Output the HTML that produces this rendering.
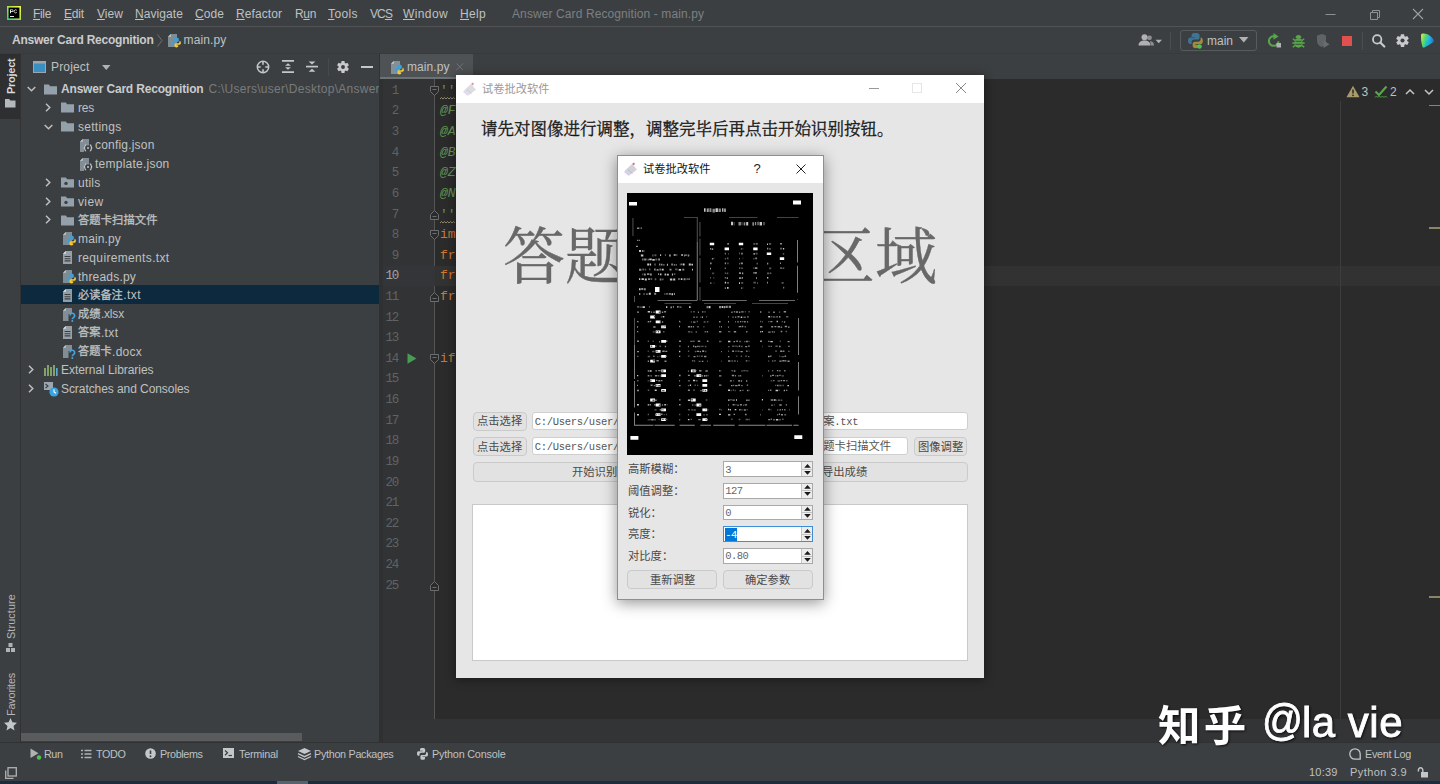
<!DOCTYPE html>
<html><head><meta charset="utf-8"><title>Answer Card Recognition - main.py</title>
<style>
html,body{margin:0;padding:0;}
body{width:1440px;height:784px;position:relative;overflow:hidden;background:#3c3f41;font-family:"Liberation Sans",sans-serif;font-size:13px;color:#bfc1c2;}
div,.t{position:absolute;box-sizing:border-box;}
.t{white-space:pre;display:block;}
u{text-decoration:underline;text-underline-offset:1px;text-decoration-thickness:1px;}
svg{overflow:visible;}
svg text{font-family:"Liberation Sans","Noto Sans CJK SC",sans-serif;white-space:pre;}
svg text.sf{font-family:"Liberation Serif","Noto Serif CJK SC",serif;}
</style></head><body>
<div style="left:0px;top:0px;width:1440px;height:27px;background:#3c3f41;border-bottom:1px solid #515354;"></div>
<svg class="t" style="left:7px;top:6px;" width="14" height="14" viewBox="0 0 14 14"><defs><linearGradient id="lg" x1="0" y1="1" x2="1" y2="0"><stop offset="0" stop-color="#21d789"/><stop offset=".5" stop-color="#a8e04a"/><stop offset="1" stop-color="#fcf84a"/></linearGradient></defs>
<rect width="14" height="14" fill="url(#lg)"/><rect x="1.6" y="1.6" width="10.8" height="10.8" fill="#000"/>
<path d="M3 3.4h2.2a1.2 1.2 0 0 1 0 2.6H3.9v1.3H3zM3.9 4.1v1.2h1.2a.6.6 0 0 0 0-1.2z" fill="#fff"/>
<path d="M9.8 4.4a1.5 1.5 0 1 0 0 1.9" stroke="#fff" stroke-width=".8" fill="none"/>
<rect x="3" y="10" width="4" height=".9" fill="#fff"/></svg>
<span class="t" style="left:33px;top:4.80px;line-height:18px;font-size:12px;color:#bfc1c2;letter-spacing:-0.334px;"><u>F</u>ile</span>
<span class="t" style="left:64px;top:4.80px;line-height:18px;font-size:12px;color:#bfc1c2;letter-spacing:-0.169px;"><u>E</u>dit</span>
<span class="t" style="left:97px;top:4.80px;line-height:18px;font-size:12px;color:#bfc1c2;letter-spacing:0.052px;"><u>V</u>iew</span>
<span class="t" style="left:135px;top:4.80px;line-height:18px;font-size:12px;color:#bfc1c2;letter-spacing:0.080px;"><u>N</u>avigate</span>
<span class="t" style="left:195px;top:4.80px;line-height:18px;font-size:12px;color:#bfc1c2;letter-spacing:0.078px;"><u>C</u>ode</span>
<span class="t" style="left:236px;top:4.80px;line-height:18px;font-size:12px;color:#bfc1c2;letter-spacing:0.081px;"><u>R</u>efactor</span>
<span class="t" style="left:295px;top:4.80px;line-height:18px;font-size:12px;color:#bfc1c2;letter-spacing:-0.338px;">R<u>u</u>n</span>
<span class="t" style="left:328px;top:4.80px;line-height:18px;font-size:12px;color:#bfc1c2;letter-spacing:0.397px;"><u>T</u>ools</span>
<span class="t" style="left:370px;top:4.80px;line-height:18px;font-size:12px;color:#bfc1c2;letter-spacing:-0.891px;">VC<u>S</u></span>
<span class="t" style="left:403px;top:4.80px;line-height:18px;font-size:12px;color:#bfc1c2;letter-spacing:0.387px;"><u>W</u>indow</span>
<span class="t" style="left:460px;top:4.80px;line-height:18px;font-size:12px;color:#bfc1c2;letter-spacing:0.330px;"><u>H</u>elp</span>
<span class="t" style="left:512px;top:4.80px;line-height:18px;font-size:12px;color:#7d8082;letter-spacing:0.099px;">Answer Card Recognition - main.py</span>
<svg class="t" style="left:1320px;top:4px;" width="110" height="20" viewBox="0 0 110 20"><path d="M5.5 10.5h10" stroke="#8e9193" stroke-width="1"/>
<path d="M50.5 8.5h7v7h-7zM52.5 8.5v-2h7v7h-2" stroke="#8e9193" stroke-width="1" fill="none"/>
<path d="M93 5l10 10M103 5l-10 10" stroke="#9da0a2" stroke-width="1.1" fill="none"/></svg>
<div style="left:0px;top:27px;width:1440px;height:27px;background:#3c3f41;border-bottom:1px solid #383b3d;"></div>
<span class="t" style="left:12px;top:31.10px;line-height:18px;font-size:12px;color:#c9cbcc;font-weight:bold;letter-spacing:-0.225px;">Answer Card Recognition</span>
<svg class="t" style="left:156px;top:33px;" width="8" height="15" viewBox="0 0 8 15"><path d="M1.5 1.5L6 7.5L1.5 13.5" stroke="#6e7173" stroke-width="1" fill="none"/></svg>
<svg class="t" style="left:168px;top:33.5px;" width="13.0" height="14.0" viewBox="0 0 13 14"><path d="M2.800 0H9v13H0V2.800z" fill="#94a1ab" opacity=".78"/><path d="M0 2.800L2.800 0v2.800z" fill="#d4dade" opacity=".8"/>
<g transform="translate(3.600,3.800) scale(.98)"><path d="M4.2 0C2.7 0 2.3.7 2.3 1.500v1h2.100v.4H1.400C.5 2.900 0 3.700 0 5s.5 2 1.400 2h.9V5.800c0-.9.7-1.600 1.700-1.600h2c.8 0 1.400-.6 1.400-1.400V1.500c0-.8-.7-1.500-1.900-1.500z" fill="#3f9fd8"/>
<path d="M8.100 2.900v1.100c0 .9-.7 1.600-1.700 1.600h-2c-.8 0-1.400.6-1.400 1.400v1.400c0 .8.700 1.400 1.900 1.400 1.400 0 1.900-.6 1.900-1.400v-.9H4.700v-.4h3.400c.9 0 1.400-.800 1.400-2s-.5-2.200-1.400-2.200z" fill="#f5cb3a"/></g></svg>
<span class="t" style="left:183.6px;top:31.10px;line-height:18px;font-size:12px;color:#bfc1c2;letter-spacing:0.126px;">main.py</span>
<svg class="t" style="left:1138px;top:33px;" width="26" height="16" viewBox="0 0 26 16"><circle cx="6.500" cy="4.200" r="3" fill="#afb1b3"/><path d="M.5 12.500c0-3.500 2.500-5 6-5s6 1.500 6 5z" fill="#afb1b3"/>
<circle cx="11.500" cy="4.800" r="2.400" fill="#afb1b3" opacity=".7"/><path d="M12 8c2.500.2 4 1.600 4 4.500h-3" fill="#afb1b3" opacity=".7"/>
<path d="M17.500 6.800h6.500l-3.250 3.400z" fill="#afb1b3"/></svg>
<div style="left:1170px;top:32px;width:1px;height:18px;background:#4b4e50;"></div>
<div style="left:1179.5px;top:30px;width:77.5px;height:21px;border:1px solid #585b5d;border-radius:3px;"></div>
<svg class="t" style="left:1187.5px;top:33px;opacity:.55;" width="15" height="15" viewBox="0 0 9.6 9.6"><path d="M4.2 0C2.7 0 2.3.7 2.3 1.500v1h2.100v.4H1.400C.5 2.900 0 3.700 0 5s.5 2 1.400 2h.9V5.800c0-.9.7-1.600 1.700-1.600h2c.8 0 1.400-.6 1.400-1.400V1.500c0-.8-.7-1.500-1.900-1.500z" fill="#3f9fd8"/>
<path d="M8.100 2.900v1.100c0 .9-.7 1.600-1.700 1.600h-2c-.8 0-1.400.6-1.400 1.400v1.400c0 .8.700 1.400 1.900 1.400 1.400 0 1.900-.6 1.900-1.400v-.9H4.700v-.4h3.400c.9 0 1.400-.800 1.400-2s-.5-2.200-1.400-2.200z" fill="#f5cb3a"/></svg>
<svg class="t" style="left:1197px;top:44px;" width="5" height="5" viewBox="0 0 5 5"><circle cx="2.500" cy="2.500" r="2.300" fill="#4fc24f"/></svg>
<span class="t" style="left:1207px;top:31.80px;line-height:18px;font-size:12px;color:#bfc1c2;letter-spacing:-0.003px;">main</span>
<svg class="t" style="left:1239px;top:37px;" width="10" height="7" viewBox="0 0 10 7"><path d="M0 0h9.500L4.750 5.500z" fill="#afb1b3"/></svg>
<svg class="t" style="left:1266px;top:32px;" width="18" height="18" viewBox="0 0 18 18"><path d="M12.500 9.300A4.800 4.800 0 1 1 8.300 4.300" stroke="#57a64a" stroke-width="2" fill="none"/>
<path d="M7.500 1l5 3.400l-5 3.400z" fill="#57a64a"/><rect x="10.500" y="11" width="4.500" height="4.500" fill="#afb1b3"/></svg>
<svg class="t" style="left:1289.5px;top:32.5px;" width="17" height="17" viewBox="0 0 17 17"><ellipse cx="8.500" cy="9.800" rx="4.100" ry="4.900" fill="#57a64a"/><path d="M5.600 4.900a2.900 2.900 0 0 1 5.800 0z" fill="#57a64a"/>
<path d="M2.800 5.800l2.700 2M14.200 5.800l-2.700 2M2.300 10h3.200M14.700 10h-3.200M2.800 14.200l2.900-2M14.200 14.200l-2.900-2" stroke="#57a64a" stroke-width="1.400" fill="none"/>
<path d="M5.500 8.300h6M5.500 11.300h6" stroke="#3c3f41" stroke-width=".9"/></svg>
<svg class="t" style="left:1314px;top:32px;" width="18" height="18" viewBox="0 0 18 18"><path d="M3 3.500l5-1.500l4 1.500v5.500c0 3-2 5-4.500 6c-2.500-1-4.500-3-4.500-6z" fill="#606366"/><path d="M9.500 8.500l6 3.700l-6 3.700z" fill="#6a6d70"/></svg>
<div style="left:1341.8px;top:35.8px;width:10.5px;height:10.5px;background:#e0504f;"></div>
<div style="left:1362px;top:32px;width:1px;height:18px;background:#4b4e50;"></div>
<svg class="t" style="left:1369px;top:32px;" width="18" height="18" viewBox="0 0 18 18"><circle cx="8.200" cy="7.400" r="4.200" stroke="#c8cacc" stroke-width="1.800" fill="none"/><path d="M11.300 10.500L15.300 14.500" stroke="#c8cacc" stroke-width="2.200" stroke-linecap="round"/></svg>
<svg class="t" style="left:1394.7px;top:33px;" width="15" height="15" viewBox="0 0 16 16"><g fill="#c8cacc"><circle cx="8" cy="8" r="4.900"/><path d="M6.300 1.200h3.400l.5 3h-4.400z" transform="rotate(0 8 8)"/><path d="M6.300 1.200h3.400l.5 3h-4.400z" transform="rotate(60 8 8)"/><path d="M6.300 1.200h3.400l.5 3h-4.400z" transform="rotate(120 8 8)"/><path d="M6.300 1.200h3.400l.5 3h-4.400z" transform="rotate(180 8 8)"/><path d="M6.300 1.200h3.400l.5 3h-4.400z" transform="rotate(240 8 8)"/><path d="M6.300 1.200h3.400l.5 3h-4.400z" transform="rotate(300 8 8)"/></g><circle cx="8" cy="8" r="2.200" fill="#3c3f41"/></svg>
<svg class="t" style="left:1420px;top:33px;" width="15" height="15" viewBox="0 0 15 15"><defs><linearGradient id="tb" x1="0" y1="0" x2="1" y2=".35"><stop offset="0" stop-color="#e6ee4a"/><stop offset=".38" stop-color="#58d66a"/><stop offset=".62" stop-color="#20c4d8"/><stop offset="1" stop-color="#2a6fe0"/></linearGradient></defs>
<path d="M2.500 .6C6.500 -.2 11.500 3 13.600 6.800c.5 .9 .3 1.700-.5 2.300C10.500 11.200 7 13.300 4.200 14.400c-1 .4-1.700-.1-1.900-1.100C1.300 9.300 .8 5.300 1.100 2c.1-.8 .6-1.300 1.400-1.400z" fill="url(#tb)"/>
<path d="M4.200 14.400C7 13.300 10.500 11.200 13.100 9.100L6.500 7.500z" fill="#18b8c8" opacity=".55"/></svg>
<div style="left:0px;top:54px;width:21px;height:689px;background:#3c3f41;border-right:1px solid #323232;"></div>
<div style="left:0px;top:54px;width:20px;height:65px;background:#2d2f30;"></div>
<span class="t" style="left:10.8px;top:93.8px;font-size:11px;line-height:16px;color:#d8dadb;letter-spacing:-0.256px;font-weight:bold;transform-origin:0 0;transform:rotate(-90deg) translate(0,-8px);">Project</span>
<svg class="t" style="left:5.3px;top:99.3px;" width="11" height="9" viewBox="0 0 11 9"><path d="M0 0h4.200l1.100 1.400H10.500V8.600H0z" fill="#b4b9bc"/></svg>
<span class="t" style="left:10.5px;top:639px;font-size:10.8px;line-height:16px;color:#b4b6b8;letter-spacing:0.131px;transform-origin:0 0;transform:rotate(-90deg) translate(0,-8px);">Structure</span>
<svg class="t" style="left:6px;top:643px;" width="10" height="10" viewBox="0 0 10 10"><rect x="0" y="5" width="4" height="4" fill="#aeb3b7"/><rect x="5" y="5" width="4" height="4" fill="#aeb3b7"/><rect x="2.500" y="0" width="4" height="4" fill="#aeb3b7"/></svg>
<span class="t" style="left:10.5px;top:716px;font-size:10.8px;line-height:16px;color:#b4b6b8;letter-spacing:-0.157px;transform-origin:0 0;transform:rotate(-90deg) translate(0,-8px);">Favorites</span>
<svg class="t" style="left:4px;top:718px;" width="13" height="13" viewBox="0 0 13 13"><path d="M6.500 0l1.900 4.300l4.600.5l-3.500 3.100l1 4.600L6.500 10.100L2.500 12.500l1-4.600L0 4.800l4.600-.5z" fill="#c4c6c8"/></svg>
<div style="left:21px;top:54px;width:359px;height:689px;background:#3c3f41;border-right:1px solid #323232;"></div>
<svg class="t" style="left:33px;top:61px;" width="13" height="12" viewBox="0 0 13 12"><rect x=".5" y=".5" width="12" height="11" fill="#3b8fc0" stroke="#9aa7b0" stroke-width="1"/><rect x="0" y="0" width="13" height="2.500" fill="#9aa7b0"/></svg>
<span class="t" style="left:51px;top:58.30px;line-height:18px;font-size:12px;color:#bfc1c2;letter-spacing:0.165px;">Project</span>
<svg class="t" style="left:101.7px;top:65.2px;" width="9" height="6" viewBox="0 0 9 6"><path d="M0 0h8.500L4.250 5z" fill="#afb1b3"/></svg>
<svg class="t" style="left:256.3px;top:60px;" width="14" height="14" viewBox="0 0 14 14"><circle cx="7" cy="7" r="5.700" stroke="#c4c6c8" stroke-width="1.500" fill="none"/><path d="M7 1.300v3.400M7 9.300v3.400M1.300 7h3.400M9.300 7h3.400" stroke="#c4c6c8" stroke-width="1.600"/></svg>
<svg class="t" style="left:282px;top:60.4px;" width="12" height="13" viewBox="0 0 12 13"><path d="M0 .9h12M0 12.100h12" stroke="#c4c6c8" stroke-width="1.700"/><path d="M6 3.200l2.900 2.500H3.100zM6 9.800L3.100 7.300h5.800z" fill="#c4c6c8"/></svg>
<svg class="t" style="left:306px;top:60px;" width="12" height="14" viewBox="0 0 12 14"><path d="M0 6.600h12" stroke="#c4c6c8" stroke-width="1.700"/><path d="M6 4.400L2.600 1.400h6.800zM6 8.800l3.400 3h-6.800z" fill="#c4c6c8"/></svg>
<div style="left:327.5px;top:58px;width:1px;height:18px;background:#474a4c;"></div>
<svg class="t" style="left:336px;top:59.5px;" width="14" height="14" viewBox="0 0 16 16"><g fill="#c8cacc"><circle cx="8" cy="8" r="4.900"/><path d="M6.300 1.200h3.400l.5 3h-4.400z" transform="rotate(0 8 8)"/><path d="M6.300 1.200h3.400l.5 3h-4.400z" transform="rotate(60 8 8)"/><path d="M6.300 1.200h3.400l.5 3h-4.400z" transform="rotate(120 8 8)"/><path d="M6.300 1.200h3.400l.5 3h-4.400z" transform="rotate(180 8 8)"/><path d="M6.300 1.200h3.400l.5 3h-4.400z" transform="rotate(240 8 8)"/><path d="M6.300 1.200h3.400l.5 3h-4.400z" transform="rotate(300 8 8)"/></g><circle cx="8" cy="8" r="2.200" fill="#3c3f41"/></svg>
<div style="left:361px;top:66px;width:12px;height:2px;background:#c4c6c8;"></div>
<div style="left:21px;top:285.375px;width:358px;height:18.75px;background:#0d293e;"></div>
<svg class="t" style="left:26.5px;top:86.1px;" width="9" height="6" viewBox="0 0 9 6"><path d="M.7 1L4.500 4.800L8.300 1" stroke="#bdbfc1" stroke-width="1.500" fill="none"/></svg>
<svg class="t" style="left:44px;top:83.5px;" width="13" height="11" viewBox="0 0 13 11"><path d="M0 .5h4.800l1.400 1.800H13V10.500H0z" fill="#94a1ab"/></svg>
<span class="t" style="left:61px;top:80.10px;line-height:18px;font-size:12px;color:#c9cbcc;font-weight:bold;letter-spacing:-0.182px;">Answer Card Recognition</span>
<div style="left:208.5px;top:79.5px;width:170.500px;height:18px;overflow:hidden;">
<span class="t" style="left:0px;top:0.30px;line-height:18px;font-size:12px;color:#787b7d;letter-spacing:0.261px;">C:\Users\user\Desktop\Answer Card</span>
</div>
<svg class="t" style="left:44.8px;top:102.85px;" width="6" height="9" viewBox="0 0 6 9"><path d="M1 .7L4.800 4.500L1 8.300" stroke="#bdbfc1" stroke-width="1.500" fill="none"/></svg>
<svg class="t" style="left:61px;top:102.25px;" width="13" height="11" viewBox="0 0 13 11"><path d="M0 .5h4.800l1.400 1.800H13V10.500H0z" fill="#94a1ab"/></svg>
<span class="t" style="left:78px;top:98.85px;line-height:18px;font-size:12px;color:#bfc1c2;letter-spacing:-0.223px;">res</span>
<svg class="t" style="left:43.5px;top:123.6px;" width="9" height="6" viewBox="0 0 9 6"><path d="M.7 1L4.500 4.800L8.300 1" stroke="#bdbfc1" stroke-width="1.500" fill="none"/></svg>
<svg class="t" style="left:61px;top:121.0px;" width="13" height="11" viewBox="0 0 13 11"><path d="M0 .5h4.800l1.400 1.800H13V10.500H0z" fill="#94a1ab"/></svg>
<span class="t" style="left:78px;top:117.60px;line-height:18px;font-size:12px;color:#bfc1c2;letter-spacing:0.268px;">settings</span>
<svg class="t" style="left:44.8px;top:177.85px;" width="6" height="9" viewBox="0 0 6 9"><path d="M1 .7L4.800 4.500L1 8.300" stroke="#bdbfc1" stroke-width="1.500" fill="none"/></svg>
<svg class="t" style="left:61px;top:177.25px;" width="13" height="11" viewBox="0 0 13 11"><path d="M0 .5h4.800l1.400 1.800H13V10.500H0z" fill="#94a1ab"/><circle cx="5" cy="6.400" r="1.700" fill="#3c3f41"/></svg>
<span class="t" style="left:78px;top:173.85px;line-height:18px;font-size:12px;color:#bfc1c2;letter-spacing:0.232px;">utils</span>
<svg class="t" style="left:44.8px;top:196.6px;" width="6" height="9" viewBox="0 0 6 9"><path d="M1 .7L4.800 4.500L1 8.300" stroke="#bdbfc1" stroke-width="1.500" fill="none"/></svg>
<svg class="t" style="left:61px;top:196.0px;" width="13" height="11" viewBox="0 0 13 11"><path d="M0 .5h4.800l1.400 1.800H13V10.500H0z" fill="#94a1ab"/><circle cx="5" cy="6.400" r="1.700" fill="#3c3f41"/></svg>
<span class="t" style="left:78px;top:192.60px;line-height:18px;font-size:12px;color:#bfc1c2;letter-spacing:0.373px;">view</span>
<svg class="t" style="left:44.8px;top:215.35px;" width="6" height="9" viewBox="0 0 6 9"><path d="M1 .7L4.800 4.500L1 8.300" stroke="#bdbfc1" stroke-width="1.500" fill="none"/></svg>
<svg class="t" style="left:61px;top:214.75px;" width="13" height="11" viewBox="0 0 13 11"><path d="M0 .5h4.800l1.400 1.800H13V10.500H0z" fill="#94a1ab"/></svg>
<svg class="t" style="left:78px;top:211.84px;" width="83.5" height="15.8"><text x="0" y="12.20" font-size="11.3" fill="#bfc1c2" stroke="#bfc1c2" stroke-width="0.3" letter-spacing="0.06">答题卡扫描文件</text></svg>
<svg class="t" style="left:80px;top:139.25px;" width="13" height="14" viewBox="0 0 13 14"><path d="M2.800 0H9v6.500H4v6.500H0V2.800z" fill="#94a1ab" opacity=".8"/><path d="M0 2.800L2.800 0v2.800z" fill="#d4dade" opacity=".8"/><path d="M6.200 5.800c-1.200 0-1.300.6-1.300 1.500s-.2 1.400-1 1.600c.8.2 1 .7 1 1.600s.1 1.500 1.300 1.500M9.800 5.800c1.200 0 1.300.6 1.300 1.500s.2 1.400 1 1.600c-.8.2-1 .7-1 1.600s-.1 1.500-1.300 1.500" stroke="#c5cacd" stroke-width="1.200" fill="none"/><circle cx="8" cy="9" r="1" fill="#c5cacd"/></svg>
<span class="t" style="left:95px;top:136.35px;line-height:18px;font-size:12px;color:#bfc1c2;letter-spacing:0.194px;">config.json</span>
<svg class="t" style="left:80px;top:158.0px;" width="13" height="14" viewBox="0 0 13 14"><path d="M2.800 0H9v6.500H4v6.500H0V2.800z" fill="#94a1ab" opacity=".8"/><path d="M0 2.800L2.800 0v2.800z" fill="#d4dade" opacity=".8"/><path d="M6.200 5.800c-1.200 0-1.300.6-1.300 1.500s-.2 1.400-1 1.600c.8.2 1 .7 1 1.600s.1 1.500 1.300 1.500M9.800 5.800c1.200 0 1.300.6 1.300 1.500s.2 1.400 1 1.600c-.8.2-1 .7-1 1.600s-.1 1.500-1.300 1.500" stroke="#c5cacd" stroke-width="1.200" fill="none"/><circle cx="8" cy="9" r="1" fill="#c5cacd"/></svg>
<span class="t" style="left:95px;top:155.10px;line-height:18px;font-size:12px;color:#bfc1c2;letter-spacing:0.241px;">template.json</span>
<svg class="t" style="left:63px;top:232.3px;" width="13.0" height="14.0" viewBox="0 0 13 14"><path d="M2.800 0H9v13H0V2.800z" fill="#94a1ab" opacity=".78"/><path d="M0 2.800L2.800 0v2.800z" fill="#d4dade" opacity=".8"/>
<g transform="translate(3.600,3.800) scale(.98)"><path d="M4.2 0C2.7 0 2.3.7 2.3 1.500v1h2.100v.4H1.400C.5 2.900 0 3.700 0 5s.5 2 1.400 2h.9V5.800c0-.9.7-1.600 1.700-1.600h2c.8 0 1.400-.6 1.400-1.400V1.500c0-.8-.7-1.500-1.900-1.500z" fill="#3f9fd8"/>
<path d="M8.100 2.900v1.100c0 .9-.7 1.600-1.700 1.600h-2c-.8 0-1.400.6-1.400 1.400v1.400c0 .8.700 1.400 1.900 1.400 1.400 0 1.900-.6 1.900-1.400v-.9H4.700v-.4h3.400c.9 0 1.400-.800 1.400-2s-.5-2.200-1.400-2.200z" fill="#f5cb3a"/></g></svg>
<span class="t" style="left:78px;top:230.10px;line-height:18px;font-size:12px;color:#bfc1c2;letter-spacing:0.140px;">main.py</span>
<svg class="t" style="left:63px;top:269.8px;" width="13.0" height="14.0" viewBox="0 0 13 14"><path d="M2.800 0H9v13H0V2.800z" fill="#94a1ab" opacity=".78"/><path d="M0 2.800L2.800 0v2.800z" fill="#d4dade" opacity=".8"/>
<g transform="translate(3.600,3.800) scale(.98)"><path d="M4.2 0C2.7 0 2.3.7 2.3 1.500v1h2.100v.4H1.400C.5 2.900 0 3.700 0 5s.5 2 1.400 2h.9V5.800c0-.9.7-1.600 1.700-1.600h2c.8 0 1.400-.6 1.400-1.400V1.500c0-.8-.7-1.500-1.900-1.500z" fill="#3f9fd8"/>
<path d="M8.100 2.900v1.100c0 .9-.7 1.600-1.700 1.600h-2c-.8 0-1.400.6-1.400 1.400v1.400c0 .8.700 1.400 1.900 1.400 1.400 0 1.900-.6 1.900-1.400v-.9H4.700v-.4h3.400c.9 0 1.400-.800 1.400-2s-.5-2.200-1.400-2.200z" fill="#f5cb3a"/></g></svg>
<span class="t" style="left:78px;top:267.60px;line-height:18px;font-size:12px;color:#bfc1c2;letter-spacing:0.197px;">threads.py</span>
<svg class="t" style="left:63px;top:251.25px;" width="9" height="13" viewBox="0 0 9 13"><path d="M2.800 0H9v13H0V2.800z" fill="#a7b2ba" opacity=".85"/><path d="M0 2.800L2.800 0v2.800z" fill="#dfe4e7"/><path d="M1.600 5.500h5.800M1.600 7.700h5.800M1.600 9.900h5.800" stroke="#3c3f41" stroke-width="1.100"/></svg>
<span class="t" style="left:78px;top:248.85px;line-height:18px;font-size:12px;color:#bfc1c2;letter-spacing:0.342px;">requirements.txt</span>
<svg class="t" style="left:63px;top:288.75px;" width="13" height="14" viewBox="0 0 13 14"><path d="M2.800 0H9v13H0V2.800z" fill="#a7b2ba" opacity=".85"/><path d="M0 2.800L2.800 0v2.800z" fill="#dfe4e7"/><path d="M1.600 5.500h5.800M1.600 7.700h5.800M1.600 9.900h5.800" stroke="#3c3f41" stroke-width="1.100"/></svg>
<svg class="t" style="left:78px;top:286.91px;" width="48.8" height="15.7"><text x="0" y="12.10" font-size="11.2" fill="#bfc1c2" stroke="#bfc1c2" stroke-width="0.3">必读备注</text></svg>
<span class="t" style="left:123.3px;top:286.35px;line-height:18px;font-size:12px;color:#bfc1c2;letter-spacing:0.425px;">.txt</span>
<svg class="t" style="left:63px;top:307.5px;" width="13" height="14" viewBox="0 0 13 14"><path d="M2.800 0H9v6H5.500v7H0V2.800z" fill="#94a1ab" opacity=".8"/><path d="M0 2.800L2.800 0v2.800z" fill="#d4dade" opacity=".8"/><path d="M7 7.600a2.300 2.300 0 1 1 3.400 2c-.8.5-1.100.9-1.100 1.700" stroke="#43a5e0" stroke-width="1.600" fill="none"/><circle cx="9.300" cy="13" r="1" fill="#43a5e0"/></svg>
<svg class="t" style="left:78px;top:305.66px;" width="26.4" height="15.7"><text x="0" y="12.10" font-size="11.2" fill="#bfc1c2" stroke="#bfc1c2" stroke-width="0.3">成绩</text></svg>
<span class="t" style="left:100.9px;top:305.10px;line-height:18px;font-size:12px;color:#bfc1c2;letter-spacing:-0.180px;">.xlsx</span>
<svg class="t" style="left:63px;top:326.25px;" width="13" height="14" viewBox="0 0 13 14"><path d="M2.800 0H9v13H0V2.800z" fill="#a7b2ba" opacity=".85"/><path d="M0 2.800L2.800 0v2.800z" fill="#dfe4e7"/><path d="M1.600 5.500h5.800M1.600 7.700h5.800M1.600 9.900h5.800" stroke="#3c3f41" stroke-width="1.100"/></svg>
<svg class="t" style="left:78px;top:324.41px;" width="26.4" height="15.7"><text x="0" y="12.10" font-size="11.2" fill="#bfc1c2" stroke="#bfc1c2" stroke-width="0.3">答案</text></svg>
<span class="t" style="left:100.9px;top:323.85px;line-height:18px;font-size:12px;color:#bfc1c2;letter-spacing:0.400px;">.txt</span>
<svg class="t" style="left:63px;top:345.0px;" width="13" height="14" viewBox="0 0 13 14"><path d="M2.800 0H9v6H5.500v7H0V2.800z" fill="#94a1ab" opacity=".8"/><path d="M0 2.800L2.800 0v2.800z" fill="#d4dade" opacity=".8"/><path d="M7 7.600a2.300 2.300 0 1 1 3.400 2c-.8.5-1.100.9-1.100 1.700" stroke="#43a5e0" stroke-width="1.600" fill="none"/><circle cx="9.300" cy="13" r="1" fill="#43a5e0"/></svg>
<svg class="t" style="left:78px;top:343.16px;" width="37.6" height="15.7"><text x="0" y="12.10" font-size="11.2" fill="#bfc1c2" stroke="#bfc1c2" stroke-width="0.3">答题卡</text></svg>
<span class="t" style="left:112.1px;top:342.60px;line-height:18px;font-size:12px;color:#bfc1c2;letter-spacing:0.244px;">.docx</span>
<svg class="t" style="left:27.8px;top:365.35px;" width="6" height="9" viewBox="0 0 6 9"><path d="M1 .7L4.800 4.500L1 8.300" stroke="#bdbfc1" stroke-width="1.500" fill="none"/></svg>
<svg class="t" style="left:44px;top:363.75px;" width="14" height="12" viewBox="0 0 14 12"><path d="M1 4v8M4 1v11M7 3v9M10 1v11" stroke="#8fb36f" stroke-width="1.700"/><path d="M12.800 4v8" stroke="#5fa8d4" stroke-width="1.700"/></svg>
<span class="t" style="left:61px;top:361.35px;line-height:18px;font-size:12px;color:#bfc1c2;letter-spacing:-0.049px;">External Libraries</span>
<svg class="t" style="left:27.8px;top:384.1px;" width="6" height="9" viewBox="0 0 6 9"><path d="M1 .7L4.800 4.500L1 8.300" stroke="#bdbfc1" stroke-width="1.500" fill="none"/></svg>
<svg class="t" style="left:44px;top:381.5px;" width="15" height="15" viewBox="0 0 15 15"><path d="M0 0h9v8H0z" fill="#9aa7b0"/><path d="M1.500 2l2.500 2l-2.500 2" stroke="#3c3f41" stroke-width="1.100" fill="none"/><circle cx="10" cy="10" r="4.600" fill="#3aa5e6"/><path d="M10 7.200V10l2 1.300" stroke="#fff" stroke-width="1.100" fill="none"/></svg>
<span class="t" style="left:61px;top:380.10px;line-height:18px;font-size:12px;color:#bfc1c2;letter-spacing:-0.071px;">Scratches and Consoles</span>
<div style="left:21px;top:732.5px;width:280.5px;height:8.5px;background:#595b5d;"></div>
<div style="left:380px;top:54px;width:1060px;height:25.5px;background:#3c3f41;border-bottom:1px solid #323232;"></div>
<div style="left:380px;top:54px;width:92.5px;height:25.5px;background:#4e5254;"></div>
<div style="left:380px;top:76.7px;width:92.5px;height:2.8px;background:#6d7275;"></div>
<svg class="t" style="left:391px;top:60.5px;" width="13.0" height="14.0" viewBox="0 0 13 14"><path d="M2.800 0H9v13H0V2.800z" fill="#94a1ab" opacity=".78"/><path d="M0 2.800L2.800 0v2.800z" fill="#d4dade" opacity=".8"/>
<g transform="translate(3.600,3.800) scale(.98)"><path d="M4.2 0C2.7 0 2.3.7 2.3 1.500v1h2.100v.4H1.400C.5 2.900 0 3.700 0 5s.5 2 1.400 2h.9V5.800c0-.9.7-1.600 1.700-1.600h2c.8 0 1.400-.6 1.400-1.400V1.500c0-.8-.7-1.500-1.900-1.500z" fill="#3f9fd8"/>
<path d="M8.100 2.900v1.100c0 .9-.7 1.600-1.700 1.600h-2c-.8 0-1.400.6-1.400 1.400v1.400c0 .8.700 1.400 1.900 1.400 1.400 0 1.900-.6 1.900-1.400v-.9H4.700v-.4h3.400c.9 0 1.400-.800 1.400-2s-.5-2.200-1.400-2.200z" fill="#f5cb3a"/></g></svg>
<span class="t" style="left:407px;top:58.30px;line-height:18px;font-size:12px;color:#bfc1c2;letter-spacing:0.069px;">main.py</span>
<svg class="t" style="left:455px;top:62px;" width="10" height="10" viewBox="0 0 10 10"><path d="M1.500 1.500l6.500 6.500M8 1.500L1.500 8" stroke="#6f7375" stroke-width="1"/></svg>
<div style="left:380px;top:79px;width:1060px;height:640px;background:#2b2b2b;"></div>
<div style="left:380px;top:79px;width:54px;height:640px;background:#313335;"></div>
<div style="left:379px;top:79px;width:3.5px;height:663px;background:#2e3032;"></div>
<div style="left:434px;top:79px;width:1px;height:640px;background:#555555;"></div>
<div style="left:382.5px;top:265.77000000000004px;width:52px;height:20.62px;background:#333538;"></div>
<div style="left:435px;top:265.77000000000004px;width:1005px;height:20.62px;background:#323232;"></div>
<span class="t" style="left:391.7px;top:81.80px;line-height:18px;font-size:12.5px;color:#606366;font-family:'Liberation Mono',monospace;letter-spacing:-1.200px;">1</span>
<span class="t" style="left:391.7px;top:102.42px;line-height:18px;font-size:12.5px;color:#606366;font-family:'Liberation Mono',monospace;letter-spacing:-1.200px;">2</span>
<span class="t" style="left:391.7px;top:123.04px;line-height:18px;font-size:12.5px;color:#606366;font-family:'Liberation Mono',monospace;letter-spacing:-1.200px;">3</span>
<span class="t" style="left:391.7px;top:143.66px;line-height:18px;font-size:12.5px;color:#606366;font-family:'Liberation Mono',monospace;letter-spacing:-1.200px;">4</span>
<span class="t" style="left:391.7px;top:164.28px;line-height:18px;font-size:12.5px;color:#606366;font-family:'Liberation Mono',monospace;letter-spacing:-1.200px;">5</span>
<span class="t" style="left:391.7px;top:184.90px;line-height:18px;font-size:12.5px;color:#606366;font-family:'Liberation Mono',monospace;letter-spacing:-1.200px;">6</span>
<span class="t" style="left:391.7px;top:205.52px;line-height:18px;font-size:12.5px;color:#606366;font-family:'Liberation Mono',monospace;letter-spacing:-1.200px;">7</span>
<span class="t" style="left:391.7px;top:226.14px;line-height:18px;font-size:12.5px;color:#606366;font-family:'Liberation Mono',monospace;letter-spacing:-1.200px;">8</span>
<span class="t" style="left:391.7px;top:246.76px;line-height:18px;font-size:12.5px;color:#606366;font-family:'Liberation Mono',monospace;letter-spacing:-1.200px;">9</span>
<span class="t" style="left:385.4px;top:267.38px;line-height:18px;font-size:12.5px;color:#a4a3a3;font-family:'Liberation Mono',monospace;letter-spacing:-1.200px;">10</span>
<span class="t" style="left:385.4px;top:288.00px;line-height:18px;font-size:12.5px;color:#606366;font-family:'Liberation Mono',monospace;letter-spacing:-1.200px;">11</span>
<span class="t" style="left:385.4px;top:308.62px;line-height:18px;font-size:12.5px;color:#606366;font-family:'Liberation Mono',monospace;letter-spacing:-1.200px;">12</span>
<span class="t" style="left:385.4px;top:329.24px;line-height:18px;font-size:12.5px;color:#606366;font-family:'Liberation Mono',monospace;letter-spacing:-1.200px;">13</span>
<span class="t" style="left:385.4px;top:349.86px;line-height:18px;font-size:12.5px;color:#606366;font-family:'Liberation Mono',monospace;letter-spacing:-1.200px;">14</span>
<span class="t" style="left:385.4px;top:370.48px;line-height:18px;font-size:12.5px;color:#606366;font-family:'Liberation Mono',monospace;letter-spacing:-1.200px;">15</span>
<span class="t" style="left:385.4px;top:391.10px;line-height:18px;font-size:12.5px;color:#606366;font-family:'Liberation Mono',monospace;letter-spacing:-1.200px;">16</span>
<span class="t" style="left:385.4px;top:411.72px;line-height:18px;font-size:12.5px;color:#606366;font-family:'Liberation Mono',monospace;letter-spacing:-1.200px;">17</span>
<span class="t" style="left:385.4px;top:432.34px;line-height:18px;font-size:12.5px;color:#606366;font-family:'Liberation Mono',monospace;letter-spacing:-1.200px;">18</span>
<span class="t" style="left:385.4px;top:452.96px;line-height:18px;font-size:12.5px;color:#606366;font-family:'Liberation Mono',monospace;letter-spacing:-1.200px;">19</span>
<span class="t" style="left:385.4px;top:473.58px;line-height:18px;font-size:12.5px;color:#606366;font-family:'Liberation Mono',monospace;letter-spacing:-1.200px;">20</span>
<span class="t" style="left:385.4px;top:494.20px;line-height:18px;font-size:12.5px;color:#606366;font-family:'Liberation Mono',monospace;letter-spacing:-1.200px;">21</span>
<span class="t" style="left:385.4px;top:514.82px;line-height:18px;font-size:12.5px;color:#606366;font-family:'Liberation Mono',monospace;letter-spacing:-1.200px;">22</span>
<span class="t" style="left:385.4px;top:535.44px;line-height:18px;font-size:12.5px;color:#606366;font-family:'Liberation Mono',monospace;letter-spacing:-1.200px;">23</span>
<span class="t" style="left:385.4px;top:556.06px;line-height:18px;font-size:12.5px;color:#606366;font-family:'Liberation Mono',monospace;letter-spacing:-1.200px;">24</span>
<span class="t" style="left:385.4px;top:576.68px;line-height:18px;font-size:12.5px;color:#606366;font-family:'Liberation Mono',monospace;letter-spacing:-1.200px;">25</span>
<svg class="t" style="left:407px;top:353.06px;" width="10" height="11" viewBox="0 0 10 11"><path d="M.5 .3L9.500 5.500L.5 10.700z" fill="#499c54"/></svg>
<svg class="t" style="left:430px;top:86.0px;" width="9" height="10" viewBox="0 0 9 10"><path d="M.5 .5h8v5L4.500 9.500L.5 5.500z" fill="#2b2b2b" stroke="#6b6e70" stroke-width="1"/><path d="M2.500 3.500h4" stroke="#6b6e70" stroke-width="1"/></svg>
<svg class="t" style="left:430px;top:209.72px;" width="9" height="10" viewBox="0 0 9 10"><path d="M.5 9.500h8v-5L4.500 .5L.5 4.500z" fill="#2b2b2b" stroke="#6b6e70" stroke-width="1"/><path d="M2.500 6.500h4" stroke="#6b6e70" stroke-width="1"/></svg>
<svg class="t" style="left:430px;top:230.34px;" width="9" height="10" viewBox="0 0 9 10"><path d="M.5 .5h8v5L4.500 9.500L.5 5.500z" fill="#2b2b2b" stroke="#6b6e70" stroke-width="1"/><path d="M2.500 3.500h4" stroke="#6b6e70" stroke-width="1"/></svg>
<svg class="t" style="left:430px;top:292.20000000000005px;" width="9" height="10" viewBox="0 0 9 10"><path d="M.5 9.500h8v-5L4.500 .5L.5 4.500z" fill="#2b2b2b" stroke="#6b6e70" stroke-width="1"/><path d="M2.500 6.500h4" stroke="#6b6e70" stroke-width="1"/></svg>
<svg class="t" style="left:430px;top:354.06px;" width="9" height="10" viewBox="0 0 9 10"><path d="M.5 .5h8v5L4.500 9.500L.5 5.500z" fill="#2b2b2b" stroke="#6b6e70" stroke-width="1"/><path d="M2.500 3.500h4" stroke="#6b6e70" stroke-width="1"/></svg>
<svg class="t" style="left:430px;top:580.88px;" width="9" height="10" viewBox="0 0 9 10"><path d="M.5 9.500h8v-5L4.500 .5L.5 4.500z" fill="#2b2b2b" stroke="#6b6e70" stroke-width="1"/><path d="M2.500 6.500h4" stroke="#6b6e70" stroke-width="1"/></svg>
<span class="t" style="left:440px;top:81.80px;line-height:18px;font-size:13px;color:#629755;font-family:'Liberation Mono',monospace;letter-spacing:0.050px;">&#x27;&#x27;&#x27;</span>
<span class="t" style="left:440px;top:102.42px;line-height:18px;font-size:13px;color:#629755;font-family:'Liberation Mono',monospace;font-style:italic;letter-spacing:0.050px;">@File</span>
<span class="t" style="left:440px;top:123.04px;line-height:18px;font-size:13px;color:#629755;font-family:'Liberation Mono',monospace;font-style:italic;letter-spacing:0.050px;">@Auth</span>
<span class="t" style="left:440px;top:143.66px;line-height:18px;font-size:13px;color:#629755;font-family:'Liberation Mono',monospace;font-style:italic;letter-spacing:0.050px;">@Blog</span>
<span class="t" style="left:440px;top:164.28px;line-height:18px;font-size:13px;color:#629755;font-family:'Liberation Mono',monospace;font-style:italic;letter-spacing:0.050px;">@ZhiH</span>
<span class="t" style="left:440px;top:184.90px;line-height:18px;font-size:13px;color:#629755;font-family:'Liberation Mono',monospace;font-style:italic;letter-spacing:0.050px;">@Note</span>
<span class="t" style="left:440px;top:205.52px;line-height:18px;font-size:13px;color:#629755;font-family:'Liberation Mono',monospace;letter-spacing:0.050px;">&#x27;&#x27;&#x27;</span>
<span class="t" style="left:440px;top:226.14px;line-height:18px;font-size:13px;color:#cc7832;font-family:'Liberation Mono',monospace;letter-spacing:0.050px;">import</span>
<span class="t" style="left:440px;top:246.76px;line-height:18px;font-size:13px;color:#cc7832;font-family:'Liberation Mono',monospace;letter-spacing:0.050px;">from</span>
<span class="t" style="left:440px;top:267.38px;line-height:18px;font-size:13px;color:#cc7832;font-family:'Liberation Mono',monospace;letter-spacing:0.050px;">from</span>
<span class="t" style="left:440px;top:288.00px;line-height:18px;font-size:13px;color:#cc7832;font-family:'Liberation Mono',monospace;letter-spacing:0.050px;">from</span>
<span class="t" style="left:440px;top:349.86px;line-height:18px;font-size:13px;color:#cc7832;font-family:'Liberation Mono',monospace;letter-spacing:0.050px;">if __</span>
<svg class="t" style="left:440px;top:97.0px;" width="16" height="3" viewBox="0 0 16 3"><path d="M0 2l1.500-1.500L3 2l1.500-1.500L6 2l1.500-1.500L9 2l1.500-1.500L12 2l1.500-1.500L15 2" stroke="#a9a27a" stroke-width=".8" fill="none"/></svg>
<svg class="t" style="left:440px;top:220.72px;" width="16" height="3" viewBox="0 0 16 3"><path d="M0 2l1.500-1.500L3 2l1.500-1.500L6 2l1.500-1.500L9 2l1.500-1.500L12 2l1.500-1.500L15 2" stroke="#a9a27a" stroke-width=".8" fill="none"/></svg>
<div style="left:1340px;top:100px;width:1px;height:619px;background:#3d3d3d;"></div>
<div style="left:1340px;top:79.5px;width:1px;height:21px;background:#2b2b2b;"></div>
<div style="left:1429px;top:104.5px;width:11px;height:1.5px;background:#8a8566;"></div>
<div style="left:1429px;top:227px;width:11px;height:1.5px;background:#8a8566;"></div>
<div style="left:1429px;top:596px;width:11px;height:1.5px;background:#8a8566;"></div>
<svg class="t" style="left:1346px;top:85px;" width="14" height="13" viewBox="0 0 14 13"><path d="M7 .8L13.500 12.200H.5z" fill="#a89c6a"/><path d="M7 4.500v4" stroke="#2b2b2b" stroke-width="1.500"/><circle cx="7" cy="10.300" r=".9" fill="#2b2b2b"/></svg>
<span class="t" style="left:1361.5px;top:83.30px;line-height:18px;font-size:12px;color:#bfc1c2;">3</span>
<svg class="t" style="left:1374px;top:85px;" width="14" height="14" viewBox="0 0 14 14"><path d="M1.500 6.500l3.500 3.500L12.500 1.500" stroke="#57a64a" stroke-width="2.200" fill="none"/><path d="M1 12.500l1.500-1.500L4 12.500l1.500-1.500L7 12.500l1.500-1.500L10 12.500l1.500-1.500L13 12.500" stroke="#57a64a" stroke-width=".9" fill="none"/></svg>
<span class="t" style="left:1390px;top:83.30px;line-height:18px;font-size:12px;color:#bfc1c2;">2</span>
<svg class="t" style="left:1405px;top:88px;" width="10" height="7" viewBox="0 0 10 7"><path d="M1 6L5 2l4 4" stroke="#c4c6c8" stroke-width="1.500" fill="none"/></svg>
<svg class="t" style="left:1424px;top:89px;" width="10" height="7" viewBox="0 0 10 7"><path d="M1 1l4 4l4-4" stroke="#c4c6c8" stroke-width="1.500" fill="none"/></svg>
<div style="left:382.5px;top:719px;width:1057.5px;height:22.5px;background:#323436;"></div>
<div style="left:0px;top:742.5px;width:1440px;height:20px;background:#3c3f41;"></div>
<div style="left:0px;top:741.5px;width:1440px;height:1px;background:#2f3133;"></div>
<svg class="t" style="left:30px;top:748px;" width="12" height="12" viewBox="0 0 12 12"><path d="M.5 .5l8 4.700l-8 4.700z" fill="#afb1b3"/><circle cx="9" cy="9.500" r="2.200" fill="#4fc24f"/></svg>
<span class="t" style="left:44px;top:744.50px;line-height:18px;font-size:10.8px;color:#bfc1c2;letter-spacing:-0.437px;">Run</span>
<svg class="t" style="left:81px;top:748.5px;" width="11" height="10" viewBox="0 0 11 10"><path d="M0 1.500h2M3.500 1.500h7M0 5h2M3.500 5h7M0 8.500h2M3.500 8.500h7" stroke="#afb1b3" stroke-width="1.700"/></svg>
<span class="t" style="left:96px;top:744.50px;line-height:18px;font-size:10.8px;color:#bfc1c2;letter-spacing:-0.376px;">TODO</span>
<svg class="t" style="left:144.5px;top:747.5px;" width="11" height="11" viewBox="0 0 11 11"><circle cx="5.500" cy="5.500" r="5.300" fill="#c4c6c8"/><path d="M5.500 2.500v3.500" stroke="#3c3f41" stroke-width="1.600"/><circle cx="5.500" cy="8.200" r=".95" fill="#3c3f41"/></svg>
<span class="t" style="left:160px;top:744.50px;line-height:18px;font-size:10.8px;color:#bfc1c2;letter-spacing:-0.389px;">Problems</span>
<svg class="t" style="left:223px;top:748px;" width="11" height="10" viewBox="0 0 11 10"><rect width="11" height="10" fill="#c4c6c8"/><path d="M2 2.500l2.500 2.300L2 7.200" stroke="#3c3f41" stroke-width="1.200" fill="none"/><path d="M5.500 7.500h3.500" stroke="#3c3f41" stroke-width="1.200"/></svg>
<span class="t" style="left:239px;top:744.50px;line-height:18px;font-size:10.8px;color:#bfc1c2;letter-spacing:-0.226px;">Terminal</span>
<svg class="t" style="left:298px;top:747.5px;" width="13" height="12" viewBox="0 0 13 12"><path d="M6.500 0L13 3L6.500 6L0 3z" fill="#c4c6c8"/><path d="M0 5.700l6.500 3l6.500-3M0 8.500l6.500 3l6.500-3" stroke="#c4c6c8" stroke-width="1.300" fill="none"/></svg>
<span class="t" style="left:314px;top:744.50px;line-height:18px;font-size:10.8px;color:#bfc1c2;letter-spacing:-0.304px;">Python Packages</span>
<svg class="t" style="left:417px;top:747.5px;" width="11" height="12" viewBox="0 0 11 12"><path d="M5.300 0C3.500 0 3 .7 3 1.600v1.200h2.500v.4H1.500C.6 3.200 0 4 0 5.500s.6 2.300 1.500 2.300h1V6.500c0-1 .8-1.800 1.800-1.800h2.400c.9 0 1.500-.7 1.500-1.500V1.600C8.200.7 7.400 0 5.300 0z" fill="#c4c6c8"/><path d="M9.700 3.200v1.300c0 1-.8 1.800-1.800 1.800H5.500c-.9 0-1.500.7-1.500 1.500v1.600c0 .9.800 1.600 2.300 1.600 1.800 0 2.300-.7 2.300-1.600V8.200H6.100v-.4h4c.9 0 1.500-.8 1.500-2.300s-.6-2.300-1.500-2.300z" fill="#c4c6c8" transform="translate(-.6,.8)"/></svg>
<span class="t" style="left:432px;top:744.50px;line-height:18px;font-size:10.8px;color:#bfc1c2;letter-spacing:-0.196px;">Python Console</span>
<svg class="t" style="left:1349px;top:747.7px;" width="13" height="13" viewBox="0 0 13 13"><path d="M6 .8a5.200 5.200 0 0 1 5.200 5.200v5.200h-5.200a5.200 5.200 0 0 1 0-10.400z" stroke="#c4c6c8" stroke-width="1.300" fill="none"/></svg>
<span class="t" style="left:1365px;top:744.50px;line-height:18px;font-size:10.8px;color:#bfc1c2;letter-spacing:-0.293px;">Event Log</span>
<div style="left:0px;top:762.5px;width:1440px;height:19px;background:#3c3f41;"></div>
<svg class="t" style="left:5px;top:766.5px;" width="12" height="12" viewBox="0 0 12 12"><rect x="3" y=".7" width="8.300" height="8.300" stroke="#afb1b3" stroke-width="1.300" fill="none"/><path d="M.7 3.500v7.800h7.800" stroke="#afb1b3" stroke-width="1.300" fill="none"/></svg>
<span class="t" style="left:1309px;top:763.10px;line-height:18px;font-size:11px;color:#bfc1c2;letter-spacing:0.195px;">10:39</span>
<span class="t" style="left:1350px;top:763.10px;line-height:18px;font-size:11px;color:#bfc1c2;letter-spacing:0.441px;">Python 3.9</span>
<svg class="t" style="left:1417px;top:767px;" width="12" height="11" viewBox="0 0 12 11"><rect x="4" y="5" width="7" height="5.500" fill="#c4c6c8"/><path d="M5.800 5V3a2.200 2.200 0 0 0-4.400 0v1.500" stroke="#c4c6c8" stroke-width="1.400" fill="none"/></svg>
<div style="left:0px;top:781px;width:1440px;height:3px;background:#1b2b40;"></div>
<div style="left:277px;top:781px;width:30.5px;height:3px;background:#56626d;"></div>
<div style="left:456px;top:75px;width:528px;height:603px;background:#e6e6e6;box-shadow:0 1px 10px rgba(0,0,0,.45);"></div>
<div style="left:456px;top:75px;width:528px;height:28px;background:#ffffff;"></div>
<svg class="t" style="left:463px;top:82px;opacity:.75;" width="14" height="14" viewBox="0 0 14 14"><path d="M1 8.500L8 2l5 5.500L6 13z" fill="#d2d2d8"/><path d="M1 8.500L6 13l-1.500 .8L.2 10z" fill="#cfcaf2"/><path d="M8 2l1.800-1.600l1 1l-.8 2.200z" fill="#c8708a"/><path d="M4 7.500l4.500 4" stroke="#bcbcc6" stroke-width="1"/></svg>
<svg class="t" style="left:482px;top:81.16px;" width="71.5" height="15.7"><text x="0" y="12.10" font-size="11.2" fill="#999999" letter-spacing="0.05">试卷批改软件</text></svg>
<svg class="t" style="left:864px;top:80px;" width="110" height="18" viewBox="0 0 110 18"><path d="M5 8.500h10" stroke="#999" stroke-width="1"/>
<rect x="48.500" y="3.500" width="9" height="9" stroke="#e6e6e6" stroke-width="1" fill="none"/>
<path d="M92 3l10 10M102 3l-10 10" stroke="#8a8a8a" stroke-width="1"/></svg>
<svg class="t" style="left:481px;top:117.45px;" width="416.5" height="23.1"><text class="sf" x="0" y="17.82" font-size="16.5" fill="#151515" stroke="#151515" stroke-width="0.3">请先对图像进行调整，调整完毕后再点击开始识别按钮。</text></svg>
<svg class="t" style="left:503px;top:212.10px;" width="438.0" height="86.8"><text class="sf" x="0" y="66.96" font-size="62" fill="#686868" stroke="#686868" stroke-width="0.37">答题卡显示区域</text></svg>
<div style="left:472.5px;top:411.5px;width:54.0px;height:19.5px;background:#e2e2e2;border:1px solid #cacaca;border-radius:4px;"></div>
<svg class="t" style="left:476.9px;top:413.34px;" width="49.2" height="15.8"><text x="0" y="12.20" font-size="11.3" fill="#4a4a4a">点击选择</text></svg>
<div style="left:532px;top:412px;width:435.5px;height:18.30000000000001px;background:#ffffff;border:1px solid #cfcfcf;border-radius:3px;"></div>
<span class="t" style="left:534.7px;top:412.60px;line-height:18px;font-size:10.5px;color:#555555;font-family:'Liberation Mono',monospace;letter-spacing:-0.281px;">C:/Users/user/</span>
<span class="t" style="left:618.98px;top:412.60px;line-height:18px;font-size:10.5px;color:#555555;font-family:'Liberation Mono',monospace;letter-spacing:-0.281px;">Desktop/Answer Card Recogni</span>
<svg class="t" style="left:811.62px;top:413.09px;" width="26.6" height="15.8"><text x="0" y="12.20" font-size="11.3" fill="#555555">答案</text></svg>
<span class="t" style="left:834.22px;top:412.60px;line-height:18px;font-size:10.5px;color:#555555;font-family:'Liberation Mono',monospace;letter-spacing:-0.281px;">.txt</span>
<div style="left:472.5px;top:436.7px;width:54.0px;height:19.5px;background:#e2e2e2;border:1px solid #cacaca;border-radius:4px;"></div>
<svg class="t" style="left:476.9px;top:438.54px;" width="49.2" height="15.8"><text x="0" y="12.20" font-size="11.3" fill="#4a4a4a">点击选择</text></svg>
<div style="left:532px;top:437.3px;width:375.6px;height:18.19999999999999px;background:#ffffff;border:1px solid #cfcfcf;border-radius:3px;"></div>
<span class="t" style="left:534.7px;top:437.80px;line-height:18px;font-size:10.5px;color:#555555;font-family:'Liberation Mono',monospace;letter-spacing:-0.281px;">C:/Users/user/</span>
<span class="t" style="left:618.98px;top:437.80px;line-height:18px;font-size:10.5px;color:#555555;font-family:'Liberation Mono',monospace;letter-spacing:-0.281px;">Desktop/Answer Card Recogni</span>
<svg class="t" style="left:811.62px;top:438.39px;" width="83.1" height="15.8"><text x="0" y="12.20" font-size="11.3" fill="#555555">答题卡扫描文件</text></svg>
<div style="left:914.2px;top:436.7px;width:53.299999999999955px;height:19.600000000000023px;background:#e2e2e2;border:1px solid #cacaca;border-radius:4px;"></div>
<svg class="t" style="left:918.25px;top:438.59px;" width="49.2" height="15.8"><text x="0" y="12.20" font-size="11.3" fill="#4a4a4a">图像调整</text></svg>
<div style="left:472.5px;top:462.3px;width:245.0px;height:19.399999999999977px;background:#e2e2e2;border:1px solid #cacaca;border-radius:4px;"></div>
<svg class="t" style="left:572.4px;top:464.09px;" width="49.2" height="15.8"><text x="0" y="12.20" font-size="11.3" fill="#4a4a4a">开始识别</text></svg>
<div style="left:722.5px;top:462.3px;width:245.0px;height:19.399999999999977px;background:#e2e2e2;border:1px solid #cacaca;border-radius:4px;"></div>
<svg class="t" style="left:822.4px;top:464.09px;" width="49.2" height="15.8"><text x="0" y="12.20" font-size="11.3" fill="#4a4a4a">导出成绩</text></svg>
<div style="left:471.8px;top:504px;width:496px;height:157.3px;background:#ffffff;border:1px solid #c9c9c9;"></div>
<div style="left:616.5px;top:154.5px;width:207.0px;height:445.0px;background:#e6e6e6;border:1px solid #8f8f8f;box-shadow:0 3px 14px rgba(0,0,0,.42);"></div>
<div style="left:617.5px;top:155.5px;width:205.0px;height:27.5px;background:#ffffff;"></div>
<svg class="t" style="left:624px;top:162px;" width="14" height="14" viewBox="0 0 14 14"><path d="M1 8.500L8 2l5 5.500L6 13z" fill="#d2d2d8"/><path d="M1 8.500L6 13l-1.500 .8L.2 10z" fill="#cfcaf2"/><path d="M8 2l1.800-1.600l1 1l-.8 2.200z" fill="#c8708a"/><path d="M4 7.500l4.500 4" stroke="#bcbcc6" stroke-width="1"/></svg>
<svg class="t" style="left:643px;top:161.16px;" width="71.5" height="15.7"><text x="0" y="12.10" font-size="11.2" fill="#111111" letter-spacing="0.05">试卷批改软件</text></svg>
<span class="t" style="left:753.5px;top:160.30px;line-height:18px;font-size:13px;color:#222222;">?</span>
<svg class="t" style="left:795.5px;top:164px;" width="10" height="10" viewBox="0 0 10 10"><path d="M.5 .5l9 9M9.500 .5l-9 9" stroke="#222" stroke-width="1"/></svg>
<svg class="t" style="left:627px;top:193px;" width="186" height="262" viewBox="0 0 186 262"><rect width="186" height="262" fill="#000"/><path d="M2.0 9.0h8.0v3.6h-8.0zM166.0 7.6h8.0v3.8h-8.0zM3.4 243.0h8.0v3.7h-8.0zM167.3 242.2h8.0v3.8h-8.0zM28.0 94.0h4.5v5.0h-4.5zM82.8 49.7h4.4v2.6h-4.4zM97.6 54.6h4.4v2.6h-4.4zM111.8 49.7h4.4v2.6h-4.4zM126.2 54.6h4.4v2.6h-4.4zM139.8 59.4h4.4v2.6h-4.4zM152.8 64.3h4.4v2.6h-4.4zM28.7 117.6h4.8v2.8h-4.8zM23.2 122.6h4.8v2.8h-4.8zM28.7 127.4h4.8v2.8h-4.8zM34.2 132.4h4.8v2.8h-4.8zM28.7 137.4h4.8v2.8h-4.8zM34.2 147.0h4.8v2.8h-4.8zM23.2 152.0h4.8v2.8h-4.8zM28.7 157.0h4.8v2.8h-4.8zM34.2 162.0h4.8v2.8h-4.8zM23.2 166.7h4.8v2.8h-4.8zM34.2 176.5h4.8v2.8h-4.8zM63.9 176.5h4.8v2.8h-4.8zM34.2 181.3h4.8v2.8h-4.8zM69.4 181.3h4.8v2.8h-4.8zM23.2 186.3h4.8v2.8h-4.8zM75.4 186.3h4.8v2.8h-4.8zM28.7 191.0h4.8v2.8h-4.8zM75.4 191.0h4.8v2.8h-4.8zM34.2 196.0h4.8v2.8h-4.8zM75.4 196.0h4.8v2.8h-4.8zM23.2 205.6h4.8v2.8h-4.8zM63.9 205.6h4.8v2.8h-4.8zM28.7 210.6h4.8v2.8h-4.8zM69.4 210.6h4.8v2.8h-4.8zM34.2 215.4h4.8v2.8h-4.8zM75.4 215.4h4.8v2.8h-4.8zM28.7 220.2h4.8v2.8h-4.8zM69.4 220.2h4.8v2.8h-4.8zM34.2 225.2h4.8v2.8h-4.8zM75.4 225.2h4.8v2.8h-4.8z" fill="#ffffff"/><path d="M77.0 15.2h1.6v3.6h-1.6zM79.8 15.5h1.0v3.6h-1.0zM81.4 15.3h1.0v3.6h-1.0zM83.3 15.3h1.0v3.6h-1.0zM88.5 15.3h2.4v3.6h-2.4zM95.1 15.2h1.3v3.6h-1.3zM104.0 28.8h2.0v3.4h-2.0zM119.2 29.1h2.0v3.4h-2.0zM132.6 29.0h2.4v3.4h-2.4zM12.0 57.0h2.0v1.9h-2.0zM13.9 61.5h2.4v1.9h-2.4zM33.1 61.2h1.0v1.9h-1.0zM42.3 61.5h1.3v1.9h-1.3zM54.4 61.1h1.3v1.9h-1.3zM58.5 61.2h1.0v1.9h-1.0zM22.3 65.4h2.4v1.9h-2.4zM25.3 65.9h2.4v1.9h-2.4zM20.2 70.6h2.0v1.9h-2.0zM22.8 70.5h1.3v1.9h-1.3zM39.9 70.8h1.0v1.9h-1.0zM54.4 70.4h1.0v1.9h-1.0zM56.0 70.5h1.6v1.9h-1.6zM61.8 70.6h2.0v1.9h-2.0zM64.4 70.7h1.6v1.9h-1.6zM34.7 75.7h2.0v1.9h-2.0zM51.7 75.9h2.4v1.9h-2.4zM65.1 75.7h0.9v1.9h-0.9zM23.3 80.6h1.3v1.9h-1.3zM32.9 80.4h1.6v1.9h-1.6zM37.6 80.5h1.3v1.9h-1.3zM39.8 80.7h2.0v1.9h-2.0zM44.9 80.5h1.0v1.9h-1.0zM12.0 85.2h1.3v1.9h-1.3zM14.5 85.2h2.4v1.9h-2.4zM17.8 85.5h2.0v1.9h-2.0zM42.9 85.5h2.4v1.9h-2.4zM46.2 85.5h2.0v1.9h-2.0zM53.8 85.2h1.6v1.9h-1.6zM62.5 85.2h0.5v1.9h-0.5zM12.0 95.3h1.6v1.9h-1.6zM21.8 99.8h2.0v1.9h-2.0zM42.3 99.9h1.3v1.9h-1.3zM44.5 100.3h1.6v1.9h-1.6zM47.3 100.0h0.7v1.9h-0.7zM97.8 88.7h1.3v1.7h-1.3zM100.0 94.0h1.6v1.7h-1.6zM115.2 79.6h1.0v1.7h-1.0zM112.0 89.2h1.0v1.7h-1.0zM128.3 79.1h1.3v1.7h-1.3zM140.0 50.4h1.0v1.7h-1.0zM140.0 83.9h1.3v1.7h-1.3zM155.9 54.9h1.3v1.7h-1.3zM15.5 113.3h2.4v1.8h-2.4zM39.0 113.3h1.3v1.8h-1.3zM62.0 113.2h1.6v1.8h-1.6zM81.5 113.0h2.0v2.2h-2.0zM94.6 112.9h1.6v2.2h-1.6zM96.8 113.0h1.0v2.2h-1.0zM20.7 118.1h2.4v1.4h-2.4zM75.3 118.2h1.0v1.4h-1.0zM35.7 123.0h1.6v1.4h-1.6zM75.0 123.4h1.0v1.4h-1.0zM113.7 123.6h1.6v1.4h-1.6zM141.2 123.1h2.0v1.4h-2.0zM152.1 123.2h1.3v1.4h-1.3zM149.6 127.8h1.3v1.4h-1.3zM34.9 133.3h2.0v1.4h-2.0zM134.6 137.9h1.4v1.4h-1.4zM39.1 147.4h1.2v1.4h-1.2zM101.0 147.8h2.4v1.4h-2.4zM143.4 147.9h2.4v1.4h-2.4zM121.4 152.4h1.1v1.4h-1.1zM52.0 157.8h1.3v1.4h-1.3zM75.2 157.4h2.0v1.4h-2.0zM141.2 162.8h1.3v1.4h-1.3zM158.3 167.2h1.0v1.4h-1.0zM22.6 177.3h2.0v1.4h-2.0zM10.0 181.9h1.3v1.4h-1.3zM76.9 182.2h1.6v1.4h-1.6zM66.0 186.8h2.0v1.4h-2.0zM111.3 187.2h1.6v1.4h-1.6zM62.8 191.6h1.3v1.4h-1.3zM160.4 191.9h1.6v1.4h-1.6zM27.7 196.6h2.0v1.4h-2.0zM101.0 196.5h2.0v1.4h-2.0zM120.3 196.8h1.0v1.4h-1.0zM148.6 196.8h2.4v1.4h-2.4zM156.8 196.8h1.0v1.4h-1.0zM60.9 206.5h2.4v1.4h-2.4zM101.0 206.4h1.6v1.4h-1.6zM109.0 206.3h1.0v1.4h-1.0zM134.9 206.1h1.1v1.4h-1.1zM146.7 206.3h2.0v1.4h-2.0zM10.0 211.0h2.0v1.4h-2.0zM20.7 211.2h1.6v1.4h-1.6zM37.3 211.1h1.6v1.4h-1.6zM77.9 216.0h1.6v1.4h-1.6zM101.0 215.8h1.0v1.4h-1.0zM102.6 216.0h1.3v1.4h-1.3zM107.7 215.9h1.6v1.4h-1.6zM162.2 216.2h0.4v1.4h-0.4zM10.0 221.1h2.0v1.4h-2.0zM92.0 220.7h2.0v1.4h-2.0zM101.0 221.2h2.4v1.4h-2.4zM60.9 225.9h1.6v1.4h-1.6zM148.9 226.0h2.4v1.4h-2.4z" fill="#c8c8c8"/><path d="M85.5 15.8h2.4v3.6h-2.4zM91.5 15.5h2.4v3.6h-2.4zM97.0 15.4h2.0v3.6h-2.0zM111.5 29.0h2.4v3.4h-2.4zM116.7 29.2h1.6v3.4h-1.6zM125.4 29.3h1.6v3.4h-1.6zM127.9 28.9h1.3v3.4h-1.3zM130.4 28.8h1.3v3.4h-1.3zM69.8 49.0h0.9v58.5h-0.9zM170.0 47.0h0.9v22.6h-0.9zM170.0 72.8h0.9v27.0h-0.9zM170.0 106.5h0.9v0.5h-0.9zM30.5 107.2h39.5v0.9h-39.5zM75.0 107.2h44.8v0.9h-44.8zM132.0 107.2h36.0v0.9h-36.0zM10.0 34.5h2.4v1.4h-2.4zM13.6 34.4h1.4v1.4h-1.4zM10.0 46.7h1.3v1.4h-1.3zM11.9 46.7h1.0v1.4h-1.0zM9.0 52.7h2.0v1.4h-2.0zM14.9 57.1h1.6v1.9h-1.6zM17.7 57.3h0.3v1.9h-0.3zM46.7 61.1h2.0v1.9h-2.0zM56.9 61.6h1.0v1.9h-1.0zM60.7 61.6h1.6v1.9h-1.6zM15.2 65.6h1.3v1.9h-1.3zM17.1 65.6h2.4v1.9h-2.4zM20.7 65.7h1.0v1.9h-1.0zM31.2 65.5h1.8v1.9h-1.8zM32.0 70.6h1.3v1.9h-1.3zM33.9 70.7h1.6v1.9h-1.6zM36.4 70.9h1.0v1.9h-1.0zM44.3 70.6h1.6v1.9h-1.6zM46.8 70.9h1.0v1.9h-1.0zM48.7 70.9h1.0v1.9h-1.0zM12.0 75.8h2.4v1.9h-2.4zM22.3 75.4h1.0v1.9h-1.0zM27.1 75.5h1.6v1.9h-1.6zM29.6 75.9h2.0v1.9h-2.0zM32.5 75.5h1.3v1.9h-1.3zM42.5 75.7h2.0v1.9h-2.0zM55.3 75.7h2.0v1.9h-2.0zM16.8 80.5h2.0v1.9h-2.0zM20.0 80.2h2.4v1.9h-2.4zM31.0 80.2h1.0v1.9h-1.0zM21.0 85.2h2.0v1.9h-2.0zM32.8 85.5h1.6v1.9h-1.6zM51.3 85.1h1.3v1.9h-1.3zM56.6 85.3h2.0v1.9h-2.0zM14.2 95.1h2.0v1.9h-2.0zM16.8 95.3h2.0v1.9h-2.0zM12.0 100.1h1.3v1.9h-1.3zM27.2 99.8h2.0v1.9h-2.0zM83.0 54.9h1.0v1.7h-1.0zM84.6 55.3h1.6v1.7h-1.6zM84.9 64.9h1.3v1.7h-1.3zM86.8 64.5h0.4v1.7h-0.4zM83.0 69.6h1.6v1.7h-1.6zM83.0 74.7h1.0v1.7h-1.0zM85.5 79.6h1.0v1.7h-1.0zM87.1 79.3h0.1v1.7h-0.1zM100.3 50.1h1.6v1.7h-1.6zM97.8 59.7h1.0v1.7h-1.0zM101.6 60.0h0.4v1.7h-0.4zM100.3 64.6h1.0v1.7h-1.0zM97.8 69.5h1.3v1.7h-1.3zM97.8 74.4h1.0v1.7h-1.0zM97.8 83.9h1.0v1.7h-1.0zM99.7 84.3h1.3v1.7h-1.3zM97.8 94.2h1.0v1.7h-1.0zM114.2 59.7h1.6v1.7h-1.6zM113.9 69.6h2.0v1.7h-2.0zM114.5 74.4h1.0v1.7h-1.0zM112.0 79.2h2.0v1.7h-2.0zM112.0 84.2h2.4v1.7h-2.4zM115.0 84.1h1.0v1.7h-1.0zM114.2 94.2h1.0v1.7h-1.0zM129.3 50.0h1.3v1.7h-1.3zM126.4 60.0h1.6v1.7h-1.6zM128.3 64.6h1.6v1.7h-1.6zM129.7 69.7h0.9v1.7h-0.9zM128.0 74.3h2.4v1.7h-2.4zM126.4 79.1h1.3v1.7h-1.3zM129.0 84.3h1.0v1.7h-1.0zM130.0 89.2h0.6v1.7h-0.6zM140.0 54.7h1.3v1.7h-1.3zM140.0 69.8h1.3v1.7h-1.3zM143.3 79.4h0.9v1.7h-0.9zM140.0 88.8h1.0v1.7h-1.0zM153.0 49.9h2.0v1.7h-2.0zM153.0 69.4h1.0v1.7h-1.0zM156.3 74.4h0.9v1.7h-0.9zM156.2 93.8h1.0v1.7h-1.0zM43.4 113.4h1.6v1.8h-1.6zM45.9 112.9h1.0v1.8h-1.0zM50.0 112.9h1.6v1.8h-1.6zM79.6 113.0h1.3v2.2h-1.3zM92.0 113.0h2.0v2.2h-2.0zM98.4 112.7h2.4v2.2h-2.4zM101.7 112.8h2.3v2.2h-2.3zM10.0 118.4h2.0v1.4h-2.0zM24.0 118.4h1.0v1.4h-1.0zM34.9 118.6h1.3v1.4h-1.3zM37.1 118.1h2.0v1.4h-2.0zM70.9 118.5h1.0v1.4h-1.0zM77.5 118.2h1.0v1.4h-1.0zM104.3 118.5h1.3v1.4h-1.3zM106.8 118.1h1.0v1.4h-1.0zM108.7 118.3h2.4v1.4h-2.4zM112.0 118.5h1.3v1.4h-1.3zM114.2 118.2h2.4v1.4h-2.4zM121.6 118.1h0.9v1.4h-0.9zM133.0 118.3h1.3v1.4h-1.3zM146.2 118.6h1.6v1.4h-1.6zM156.7 118.0h2.4v1.4h-2.4zM69.3 123.4h1.3v1.4h-1.3zM108.0 123.4h1.3v1.4h-1.3zM110.5 123.1h2.0v1.4h-2.0zM120.1 123.2h1.6v1.4h-1.6zM149.3 123.2h1.6v1.4h-1.6zM10.0 127.9h1.6v1.4h-1.6zM20.7 128.1h1.6v1.4h-1.6zM22.9 127.8h1.3v1.4h-1.3zM34.9 128.3h1.3v1.4h-1.3zM52.0 127.8h1.0v1.4h-1.0zM53.6 128.3h0.4v1.4h-0.4zM66.1 128.4h2.4v1.4h-2.4zM92.0 128.0h1.6v1.4h-1.6zM101.0 128.1h1.0v1.4h-1.0zM110.2 128.2h1.6v1.4h-1.6zM113.0 127.9h1.3v1.4h-1.3zM117.1 128.1h1.6v1.4h-1.6zM119.9 128.2h1.3v1.4h-1.3zM135.5 128.1h0.5v1.4h-0.5zM143.4 127.9h2.0v1.4h-2.0zM156.9 128.3h1.3v1.4h-1.3zM10.0 133.3h1.0v1.4h-1.0zM11.9 132.9h0.1v1.4h-0.1zM26.2 133.3h2.4v1.4h-2.4zM52.0 132.8h1.0v1.4h-1.0zM60.9 133.0h2.4v1.4h-2.4zM63.9 133.1h1.3v1.4h-1.3zM66.1 133.1h1.0v1.4h-1.0zM93.9 133.0h1.0v1.4h-1.0zM101.0 133.4h1.0v1.4h-1.0zM111.7 132.9h2.4v1.4h-2.4zM114.7 132.8h1.6v1.4h-1.6zM133.0 133.1h2.4v1.4h-2.4zM144.2 133.1h2.0v1.4h-2.0zM147.4 132.9h2.0v1.4h-2.0zM150.6 133.0h2.4v1.4h-2.4zM153.6 133.4h1.6v1.4h-1.6zM157.7 132.8h2.4v1.4h-2.4zM161.0 133.4h1.6v1.4h-1.6zM10.0 137.9h1.3v1.4h-1.3zM68.7 138.3h1.0v1.4h-1.0zM80.1 138.0h1.0v1.4h-1.0zM92.0 138.0h2.4v1.4h-2.4zM106.8 138.0h2.4v1.4h-2.4zM119.1 138.1h1.3v1.4h-1.3zM133.0 138.0h1.0v1.4h-1.0zM141.2 138.4h2.4v1.4h-2.4zM144.8 138.2h1.3v1.4h-1.3zM146.7 138.3h1.0v1.4h-1.0zM153.7 137.8h1.6v1.4h-1.6zM158.7 137.8h1.0v1.4h-1.0zM10.0 147.5h2.0v1.4h-2.0zM32.1 148.0h1.0v1.4h-1.0zM52.0 147.5h2.0v1.4h-2.0zM63.4 147.7h1.3v1.4h-1.3zM70.8 147.5h2.4v1.4h-2.4zM79.9 147.5h1.5v1.4h-1.5zM106.5 147.9h1.6v1.4h-1.6zM109.3 147.5h1.6v1.4h-1.6zM118.8 147.8h2.0v1.4h-2.0zM133.0 147.6h2.0v1.4h-2.0zM141.2 147.7h1.3v1.4h-1.3zM160.6 147.9h2.0v1.4h-2.0zM37.8 152.8h1.3v1.4h-1.3zM60.9 152.8h1.0v1.4h-1.0zM66.0 152.5h1.3v1.4h-1.3zM67.9 153.0h1.6v1.4h-1.6zM70.1 152.7h1.6v1.4h-1.6zM72.3 152.8h1.0v1.4h-1.0zM111.9 152.6h1.3v1.4h-1.3zM114.4 152.8h1.0v1.4h-1.0zM118.2 152.9h2.0v1.4h-2.0zM135.6 152.8h0.4v1.4h-0.4zM143.7 152.7h1.0v1.4h-1.0zM152.0 152.8h1.6v1.4h-1.6zM161.2 152.7h1.4v1.4h-1.4zM10.0 157.9h2.0v1.4h-2.0zM28.7 157.6h2.4v1.4h-2.4zM35.3 157.5h2.4v1.4h-2.4zM38.3 157.7h2.0v1.4h-2.0zM53.9 157.9h0.1v1.4h-0.1zM69.7 157.7h2.4v1.4h-2.4zM72.7 157.9h1.3v1.4h-1.3zM94.2 157.9h0.8v1.4h-0.8zM105.1 157.6h2.0v1.4h-2.0zM113.4 157.9h2.4v1.4h-2.4zM119.2 157.5h1.3v1.4h-1.3zM148.4 157.4h1.3v1.4h-1.3zM153.1 157.6h2.4v1.4h-2.4zM156.1 157.6h1.3v1.4h-1.3zM161.4 157.7h1.0v1.4h-1.0zM26.2 162.5h1.3v1.4h-1.3zM38.5 162.6h1.3v1.4h-1.3zM52.0 162.7h1.3v1.4h-1.3zM66.5 162.9h2.0v1.4h-2.0zM77.0 162.8h2.4v1.4h-2.4zM101.0 162.9h1.3v1.4h-1.3zM121.3 162.9h1.0v1.4h-1.0zM143.1 162.5h1.3v1.4h-1.3zM157.5 162.6h1.6v1.4h-1.6zM20.7 167.5h1.3v1.4h-1.3zM29.4 167.1h2.4v1.4h-2.4zM37.5 167.5h2.0v1.4h-2.0zM65.3 167.1h1.0v1.4h-1.0zM74.8 167.7h1.6v1.4h-1.6zM94.6 167.5h0.4v1.4h-0.4zM101.0 167.3h2.4v1.4h-2.4zM104.6 167.3h1.0v1.4h-1.0zM118.8 167.2h1.6v1.4h-1.6zM145.3 167.3h1.0v1.4h-1.0zM147.5 167.1h1.0v1.4h-1.0zM152.3 167.4h2.4v1.4h-2.4zM155.3 167.1h2.4v1.4h-2.4zM160.5 167.6h2.1v1.4h-2.1zM20.7 177.3h1.3v1.4h-1.3zM28.4 177.2h1.6v1.4h-1.6zM31.2 176.9h2.4v1.4h-2.4zM60.9 177.4h1.0v1.4h-1.0zM72.1 177.1h2.4v1.4h-2.4zM78.4 177.3h2.4v1.4h-2.4zM92.0 177.2h1.6v1.4h-1.6zM104.6 177.1h1.0v1.4h-1.0zM106.8 177.3h1.6v1.4h-1.6zM141.2 177.2h1.0v1.4h-1.0zM149.9 176.9h1.3v1.4h-1.3zM157.2 177.0h1.3v1.4h-1.3zM162.5 177.0h0.1v1.4h-0.1zM20.7 182.0h1.6v1.4h-1.6zM23.5 182.2h1.3v1.4h-1.3zM27.9 182.1h2.4v1.4h-2.4zM52.0 181.8h1.6v1.4h-1.6zM60.9 181.7h2.0v1.4h-2.0zM67.3 182.0h1.3v1.4h-1.3zM71.8 182.1h2.0v1.4h-2.0zM74.4 182.2h1.6v1.4h-1.6zM79.1 182.0h1.3v1.4h-1.3zM81.0 181.8h0.4v1.4h-0.4zM92.0 182.2h2.4v1.4h-2.4zM104.8 181.8h2.4v1.4h-2.4zM108.1 182.0h1.0v1.4h-1.0zM111.3 182.2h1.3v1.4h-1.3zM113.2 182.0h1.0v1.4h-1.0zM135.5 182.0h0.5v1.4h-0.5zM143.1 182.3h1.3v1.4h-1.3zM145.0 181.7h2.0v1.4h-2.0zM149.8 182.1h1.6v1.4h-1.6zM152.3 181.7h1.3v1.4h-1.3zM11.6 187.0h0.4v1.4h-0.4zM28.8 186.7h1.6v1.4h-1.6zM31.3 187.0h2.0v1.4h-2.0zM33.9 186.9h1.6v1.4h-1.6zM52.0 187.2h1.0v1.4h-1.0zM53.9 186.9h0.1v1.4h-0.1zM102.9 187.2h2.0v1.4h-2.0zM113.8 187.3h1.3v1.4h-1.3zM119.0 187.3h1.3v1.4h-1.3zM146.2 186.9h1.3v1.4h-1.3zM153.6 186.9h1.6v1.4h-1.6zM156.1 186.9h2.0v1.4h-2.0zM10.0 191.7h1.0v1.4h-1.0zM23.6 191.5h2.0v1.4h-2.0zM26.8 191.9h1.0v1.4h-1.0zM29.0 191.5h1.6v1.4h-1.6zM52.0 191.9h1.6v1.4h-1.6zM92.0 191.4h2.4v1.4h-2.4zM104.0 191.9h1.6v1.4h-1.6zM106.2 191.7h1.0v1.4h-1.0zM108.1 191.9h2.4v1.4h-2.4zM111.1 191.6h2.0v1.4h-2.0zM114.3 191.9h1.3v1.4h-1.3zM119.8 191.4h1.3v1.4h-1.3zM150.0 191.8h1.6v1.4h-1.6zM10.0 196.8h2.0v1.4h-2.0zM60.9 196.5h2.0v1.4h-2.0zM105.8 196.4h1.0v1.4h-1.0zM112.6 196.9h1.6v1.4h-1.6zM115.4 196.7h1.0v1.4h-1.0zM141.2 196.7h1.0v1.4h-1.0zM143.1 196.6h1.3v1.4h-1.3zM159.0 196.7h1.3v1.4h-1.3zM28.1 206.5h1.6v1.4h-1.6zM52.0 206.2h1.6v1.4h-1.6zM105.4 206.4h2.4v1.4h-2.4zM119.1 206.6h1.6v1.4h-1.6zM121.3 206.5h1.2v1.4h-1.2zM143.7 206.3h2.4v1.4h-2.4zM151.2 206.4h1.6v1.4h-1.6zM22.9 211.0h1.0v1.4h-1.0zM27.0 211.2h2.0v1.4h-2.0zM35.1 211.3h1.0v1.4h-1.0zM39.8 211.1h0.5v1.4h-0.5zM52.0 211.1h1.6v1.4h-1.6zM65.3 211.3h1.0v1.4h-1.0zM71.9 211.5h2.4v1.4h-2.4zM105.6 211.1h2.0v1.4h-2.0zM110.4 211.5h1.3v1.4h-1.3zM112.9 211.1h2.0v1.4h-2.0zM117.7 211.2h2.4v1.4h-2.4zM152.3 211.3h2.4v1.4h-2.4zM158.7 211.2h1.3v1.4h-1.3zM32.7 216.0h2.0v1.4h-2.0zM35.3 216.1h1.3v1.4h-1.3zM112.1 216.1h1.6v1.4h-1.6zM116.8 216.3h2.0v1.4h-2.0zM135.6 216.2h0.4v1.4h-0.4zM141.2 215.8h1.6v1.4h-1.6zM152.5 216.2h1.6v1.4h-1.6zM155.0 215.9h1.0v1.4h-1.0zM157.2 216.1h1.3v1.4h-1.3zM28.2 221.1h2.0v1.4h-2.0zM31.4 221.0h1.3v1.4h-1.3zM33.9 220.6h1.6v1.4h-1.6zM106.5 220.7h1.6v1.4h-1.6zM118.0 220.8h1.6v1.4h-1.6zM151.8 220.6h1.3v1.4h-1.3zM154.0 221.0h2.0v1.4h-2.0zM24.2 226.0h2.4v1.4h-2.4zM27.5 226.0h1.0v1.4h-1.0zM71.3 225.9h2.4v1.4h-2.4zM78.4 225.9h2.4v1.4h-2.4zM121.6 225.8h0.9v1.4h-0.9zM141.2 225.9h2.0v1.4h-2.0zM143.8 225.6h1.0v1.4h-1.0zM7.0 152.0h0.9v34.0h-0.9zM7.0 188.0h0.9v26.6h-0.9zM7.0 219.4h0.9v13.0h-0.9zM171.0 125.0h0.9v37.1h-0.9zM171.0 169.0h0.9v28.5h-0.9zM171.0 203.3h0.9v18.3h-0.9zM7.0 231.8h19.5v0.9h-19.5zM27.6 231.8h20.1v0.9h-20.1zM52.6 231.8h15.2v0.9h-15.2zM73.4 231.8h10.6v0.9h-10.6zM86.3 231.8h21.4v0.9h-21.4zM111.5 231.8h26.9v0.9h-26.9zM139.5 231.8h25.6v0.9h-25.6zM166.4 231.8h5.2v0.9h-5.2z" fill="#8c8c8c"/><path d="M106.6 29.1h1.0v3.4h-1.0zM114.5 28.9h1.0v3.4h-1.0zM136.2 28.9h1.6v3.4h-1.6zM57.0 24.2h13.0v0.9h-13.0zM102.0 24.2h28.5v0.9h-28.5zM150.0 24.2h21.5v0.9h-21.5zM5.5 25.0h0.9v18.0h-0.9zM7.0 103.0h0.9v6.0h-0.9zM69.8 24.0h0.9v25.0h-0.9zM72.5 29.0h0.9v14.5h-0.9zM72.5 45.6h0.9v17.0h-0.9zM72.5 64.9h0.9v24.5h-0.9zM72.5 94.0h0.9v13.5h-0.9zM37.6 110.2h26.8v0.9h-26.8zM77.0 110.2h32.0v0.9h-32.0zM125.0 110.2h36.0v0.9h-36.0zM25.2 61.6h1.3v1.9h-1.3zM27.4 61.3h2.0v1.9h-2.0zM37.9 61.1h1.0v1.9h-1.0zM49.3 61.1h1.0v1.9h-1.0zM28.3 65.5h2.0v1.9h-2.0zM27.2 70.5h1.6v1.9h-1.6zM52.8 70.5h1.0v1.9h-1.0zM15.3 75.5h2.0v1.9h-2.0zM17.9 75.7h1.3v1.9h-1.3zM48.1 75.4h2.4v1.9h-2.4zM15.2 80.4h1.0v1.9h-1.0zM46.8 80.2h1.6v1.9h-1.6zM23.6 85.0h1.6v1.9h-1.6zM27.7 85.3h1.6v1.9h-1.6zM35.0 85.4h1.6v1.9h-1.6zM59.5 85.2h2.4v1.9h-2.4zM16.4 100.0h1.3v1.9h-1.3zM18.9 100.2h2.0v1.9h-2.0zM37.4 100.0h1.0v1.9h-1.0zM39.0 99.9h2.4v1.9h-2.4zM87.1 54.9h0.1v1.7h-0.1zM83.0 83.9h1.0v1.7h-1.0zM86.5 84.0h0.7v1.7h-0.7zM83.0 89.2h1.6v1.7h-1.6zM86.8 89.2h0.4v1.7h-0.4zM97.8 64.9h1.3v1.7h-1.3zM100.3 69.6h1.3v1.7h-1.3zM97.8 79.4h1.3v1.7h-1.3zM99.7 79.5h1.6v1.7h-1.6zM100.0 89.1h2.0v1.7h-2.0zM113.9 55.0h1.3v1.7h-1.3zM115.8 54.9h0.4v1.7h-0.4zM112.0 59.6h1.0v1.7h-1.0zM112.0 64.9h1.0v1.7h-1.0zM115.8 64.5h0.4v1.7h-0.4zM112.0 69.7h1.3v1.7h-1.3zM112.0 74.2h1.3v1.7h-1.3zM114.2 89.1h2.0v1.7h-2.0zM115.8 93.7h0.4v1.7h-0.4zM126.4 50.0h2.0v1.7h-2.0zM128.6 59.8h2.0v1.7h-2.0zM126.4 64.9h1.0v1.7h-1.0zM130.5 64.6h0.1v1.7h-0.1zM126.4 74.2h1.0v1.7h-1.0zM126.4 88.8h2.4v1.7h-2.4zM126.4 93.9h1.3v1.7h-1.3zM141.9 50.1h2.3v1.7h-2.3zM142.2 55.0h1.6v1.7h-1.6zM142.2 74.6h2.0v1.7h-2.0zM140.0 79.5h2.4v1.7h-2.4zM153.0 54.8h2.0v1.7h-2.0zM155.8 60.0h1.4v1.7h-1.4zM153.0 74.2h2.4v1.7h-2.4zM154.6 89.1h2.0v1.7h-2.0zM10.0 112.9h2.4v1.8h-2.4zM13.3 113.2h1.3v1.8h-1.3zM22.1 112.9h0.9v1.8h-0.9zM52.5 113.2h2.0v1.8h-2.0zM25.9 118.5h2.4v1.4h-2.4zM31.7 118.5h2.0v1.4h-2.0zM63.7 118.2h1.3v1.4h-1.3zM66.2 118.0h1.6v1.4h-1.6zM117.8 118.0h1.0v1.4h-1.0zM141.2 118.5h1.6v1.4h-1.6zM151.9 118.4h1.3v1.4h-1.3zM26.9 123.1h1.3v1.4h-1.3zM33.8 123.3h1.0v1.4h-1.0zM66.1 123.6h2.0v1.4h-2.0zM73.4 123.5h1.0v1.4h-1.0zM79.2 123.1h1.0v1.4h-1.0zM101.0 123.0h1.0v1.4h-1.0zM105.1 123.4h2.0v1.4h-2.0zM116.5 123.5h2.4v1.4h-2.4zM144.1 123.0h1.3v1.4h-1.3zM146.0 123.3h2.4v1.4h-2.4zM159.0 123.1h2.4v1.4h-2.4zM32.7 128.1h1.0v1.4h-1.0zM63.9 128.3h1.0v1.4h-1.0zM69.7 127.8h1.3v1.4h-1.3zM76.6 128.3h2.0v1.4h-2.0zM79.8 128.1h1.6v1.4h-1.6zM108.0 128.1h1.0v1.4h-1.0zM114.9 127.9h1.6v1.4h-1.6zM133.0 127.8h1.3v1.4h-1.3zM141.2 127.9h1.3v1.4h-1.3zM154.7 127.9h1.3v1.4h-1.3zM37.5 132.9h1.0v1.4h-1.0zM69.9 133.0h2.0v1.4h-2.0zM76.4 133.0h1.0v1.4h-1.0zM92.0 133.0h1.0v1.4h-1.0zM117.5 133.0h1.6v1.4h-1.6zM25.7 138.2h2.0v1.4h-2.0zM28.6 138.1h1.0v1.4h-1.0zM30.8 138.1h1.3v1.4h-1.3zM35.9 138.0h1.6v1.4h-1.6zM60.9 138.1h2.4v1.4h-2.4zM63.9 138.4h1.6v1.4h-1.6zM77.5 138.0h2.0v1.4h-2.0zM101.0 137.9h2.4v1.4h-2.4zM20.7 147.6h1.3v1.4h-1.3zM25.7 147.5h1.0v1.4h-1.0zM65.3 147.5h2.4v1.4h-2.4zM92.0 147.8h2.4v1.4h-2.4zM112.1 147.8h2.0v1.4h-2.0zM117.2 147.9h1.0v1.4h-1.0zM121.4 147.8h1.1v1.4h-1.1zM152.8 147.6h1.0v1.4h-1.0zM23.9 152.5h1.3v1.4h-1.3zM28.0 152.5h1.6v1.4h-1.6zM32.4 152.5h1.6v1.4h-1.6zM52.0 152.5h1.6v1.4h-1.6zM74.2 152.7h2.4v1.4h-2.4zM77.8 152.8h1.6v1.4h-1.6zM101.0 152.9h1.6v1.4h-1.6zM105.1 152.6h2.4v1.4h-2.4zM108.4 152.5h1.3v1.4h-1.3zM110.3 152.8h1.0v1.4h-1.0zM141.2 152.7h1.6v1.4h-1.6zM148.4 152.6h2.4v1.4h-2.4zM20.7 157.5h1.0v1.4h-1.0zM25.1 157.8h2.4v1.4h-2.4zM60.9 157.5h1.3v1.4h-1.3zM67.8 157.8h1.3v1.4h-1.3zM78.1 157.8h1.3v1.4h-1.3zM101.0 157.6h1.0v1.4h-1.0zM108.3 157.5h1.3v1.4h-1.3zM110.5 157.6h2.0v1.4h-2.0zM121.7 157.4h0.8v1.4h-0.8zM10.0 162.7h1.6v1.4h-1.6zM20.7 162.8h2.4v1.4h-2.4zM30.3 162.9h1.0v1.4h-1.0zM32.5 162.7h1.0v1.4h-1.0zM60.9 162.4h1.6v1.4h-1.6zM69.7 162.6h1.6v1.4h-1.6zM71.9 162.4h1.0v1.4h-1.0zM73.8 162.5h2.0v1.4h-2.0zM109.3 162.5h1.0v1.4h-1.0zM113.7 162.6h1.3v1.4h-1.3zM118.1 162.4h2.0v1.4h-2.0zM152.3 162.5h1.0v1.4h-1.0zM154.5 162.9h2.4v1.4h-2.4zM25.8 167.1h2.4v1.4h-2.4zM66.9 167.3h1.3v1.4h-1.3zM71.6 167.7h2.0v1.4h-2.0zM79.9 167.5h1.0v1.4h-1.0zM106.8 167.3h2.0v1.4h-2.0zM110.0 167.5h1.0v1.4h-1.0zM121.6 167.2h0.9v1.4h-0.9zM141.2 167.3h1.0v1.4h-1.0zM34.5 177.3h2.0v1.4h-2.0zM65.3 177.3h2.4v1.4h-2.4zM68.6 176.9h1.0v1.4h-1.0zM94.8 177.1h0.2v1.4h-0.2zM114.4 177.3h1.3v1.4h-1.3zM116.3 176.9h2.4v1.4h-2.4zM119.3 177.2h2.0v1.4h-2.0zM145.0 177.1h1.3v1.4h-1.3zM151.8 177.1h2.0v1.4h-2.0zM30.9 182.0h1.3v1.4h-1.3zM32.8 182.2h1.3v1.4h-1.3zM148.2 182.1h1.0v1.4h-1.0zM154.5 182.2h2.4v1.4h-2.4zM10.0 187.1h1.0v1.4h-1.0zM20.7 187.1h1.0v1.4h-1.0zM22.6 187.2h2.0v1.4h-2.0zM60.9 187.1h2.0v1.4h-2.0zM68.6 187.1h2.0v1.4h-2.0zM106.1 187.2h1.0v1.4h-1.0zM143.7 187.2h1.6v1.4h-1.6zM150.6 187.3h2.4v1.4h-2.4zM159.0 187.0h1.6v1.4h-1.6zM31.2 191.9h2.4v1.4h-2.4zM60.9 191.9h1.3v1.4h-1.3zM67.5 191.5h1.3v1.4h-1.3zM70.0 191.7h1.3v1.4h-1.3zM148.1 191.7h1.3v1.4h-1.3zM152.2 191.8h2.4v1.4h-2.4zM155.5 191.8h1.3v1.4h-1.3zM20.7 196.6h1.6v1.4h-1.6zM35.1 196.9h2.4v1.4h-2.4zM66.0 196.4h2.0v1.4h-2.0zM73.0 196.9h2.4v1.4h-2.4zM76.0 196.4h1.3v1.4h-1.3zM77.9 196.8h1.3v1.4h-1.3zM80.1 196.5h1.0v1.4h-1.0zM103.6 196.8h1.0v1.4h-1.0zM107.7 196.8h1.0v1.4h-1.0zM121.9 196.7h0.6v1.4h-0.6zM151.6 196.5h1.0v1.4h-1.0zM25.5 206.5h2.0v1.4h-2.0zM64.2 206.1h1.6v1.4h-1.6zM78.8 206.3h1.6v1.4h-1.6zM103.2 206.1h1.6v1.4h-1.6zM149.3 206.5h1.0v1.4h-1.0zM153.7 206.5h1.6v1.4h-1.6zM31.8 211.5h2.4v1.4h-2.4zM67.5 211.4h1.6v1.4h-1.6zM101.0 211.3h1.0v1.4h-1.0zM108.5 211.0h1.0v1.4h-1.0zM116.1 211.6h1.0v1.4h-1.0zM144.0 211.6h2.0v1.4h-2.0zM146.9 211.2h1.0v1.4h-1.0zM27.5 216.2h2.0v1.4h-2.0zM60.9 216.0h2.0v1.4h-2.0zM64.1 216.2h2.0v1.4h-2.0zM66.7 216.3h2.0v1.4h-2.0zM80.7 216.0h0.7v1.4h-0.7zM92.0 215.8h1.6v1.4h-1.6zM94.2 216.2h0.8v1.4h-0.8zM114.3 216.2h1.3v1.4h-1.3zM119.7 216.0h1.0v1.4h-1.0zM143.4 216.2h1.0v1.4h-1.0zM150.0 216.3h1.3v1.4h-1.3zM20.7 220.8h1.3v1.4h-1.3zM36.7 220.9h1.0v1.4h-1.0zM38.9 220.8h1.0v1.4h-1.0zM52.0 220.8h1.3v1.4h-1.3zM60.9 221.1h1.0v1.4h-1.0zM76.3 221.2h1.6v1.4h-1.6zM79.1 221.0h1.6v1.4h-1.6zM133.0 221.1h1.0v1.4h-1.0zM149.9 221.1h1.3v1.4h-1.3zM157.2 221.0h2.0v1.4h-2.0zM20.7 226.0h1.0v1.4h-1.0zM22.3 226.0h1.3v1.4h-1.3zM31.6 225.8h1.0v1.4h-1.0zM35.1 225.7h1.6v1.4h-1.6zM37.9 225.8h2.4v1.4h-2.4zM52.0 226.0h1.3v1.4h-1.3zM63.7 225.7h1.3v1.4h-1.3zM104.2 225.6h1.3v1.4h-1.3zM111.7 225.8h1.6v1.4h-1.6zM118.6 225.8h2.4v1.4h-2.4zM146.0 226.0h2.0v1.4h-2.0zM152.2 226.1h1.6v1.4h-1.6zM155.0 225.6h1.6v1.4h-1.6zM7.0 125.0h0.9v27.0h-0.9z" fill="#5a5a5a"/></svg>
<svg class="t" style="left:627.5px;top:461.09px;" width="60.5" height="15.8"><text x="0" y="12.20" font-size="11.3" fill="#4a4a4a">高斯模糊：</text></svg>
<div style="left:723.3px;top:461.2px;width:89.5px;height:15.8px;background:#ffffff;border:1px solid #a9a9a9;"></div>
<div style="left:801.2px;top:462.2px;width:10.6px;height:13.8px;background:#ededed;border-left:1px solid #c4c4c4;"></div>
<div style="left:801.2px;top:468.7px;width:10.6px;height:1px;background:#c4c4c4;"></div>
<svg class="t" style="left:803.5px;top:463.7px;" width="7" height="11" viewBox="0 0 7 11"><path d="M3.500 0L6.800 3.800H.2z" fill="#1a1a1a"/><path d="M3.500 10.800L.2 7H6.800z" fill="#1a1a1a"/></svg>
<span class="t" style="left:725.2px;top:460.60px;line-height:18px;font-size:10.5px;color:#666666;font-family:'Liberation Mono',monospace;letter-spacing:-0.501px;">3</span>
<svg class="t" style="left:627.5px;top:482.81px;" width="60.5" height="15.8"><text x="0" y="12.20" font-size="11.3" fill="#4a4a4a">阈值调整：</text></svg>
<div style="left:723.3px;top:482.91999999999996px;width:89.5px;height:15.8px;background:#ffffff;border:1px solid #a9a9a9;"></div>
<div style="left:801.2px;top:483.91999999999996px;width:10.6px;height:13.8px;background:#ededed;border-left:1px solid #c4c4c4;"></div>
<div style="left:801.2px;top:490.41999999999996px;width:10.6px;height:1px;background:#c4c4c4;"></div>
<svg class="t" style="left:803.5px;top:485.41999999999996px;" width="7" height="11" viewBox="0 0 7 11"><path d="M3.500 0L6.800 3.800H.2z" fill="#1a1a1a"/><path d="M3.500 10.800L.2 7H6.800z" fill="#1a1a1a"/></svg>
<span class="t" style="left:725.2px;top:482.32px;line-height:18px;font-size:10.5px;color:#666666;font-family:'Liberation Mono',monospace;letter-spacing:-0.501px;">127</span>
<svg class="t" style="left:627.5px;top:504.53px;" width="37.9" height="15.8"><text x="0" y="12.20" font-size="11.3" fill="#4a4a4a">锐化：</text></svg>
<div style="left:723.3px;top:504.64px;width:89.5px;height:15.8px;background:#ffffff;border:1px solid #a9a9a9;"></div>
<div style="left:801.2px;top:505.64px;width:10.6px;height:13.8px;background:#ededed;border-left:1px solid #c4c4c4;"></div>
<div style="left:801.2px;top:512.14px;width:10.6px;height:1px;background:#c4c4c4;"></div>
<svg class="t" style="left:803.5px;top:507.14px;" width="7" height="11" viewBox="0 0 7 11"><path d="M3.500 0L6.800 3.800H.2z" fill="#1a1a1a"/><path d="M3.500 10.800L.2 7H6.800z" fill="#1a1a1a"/></svg>
<span class="t" style="left:725.2px;top:504.04px;line-height:18px;font-size:10.5px;color:#666666;font-family:'Liberation Mono',monospace;letter-spacing:-0.501px;">0</span>
<svg class="t" style="left:627.5px;top:526.25px;" width="37.9" height="15.8"><text x="0" y="12.20" font-size="11.3" fill="#4a4a4a">亮度：</text></svg>
<div style="left:723.3px;top:526.36px;width:89.5px;height:15.8px;background:#ffffff;border:1px solid #3d8ed8;"></div>
<div style="left:801.2px;top:527.36px;width:10.6px;height:13.8px;background:#ededed;border-left:1px solid #c4c4c4;"></div>
<div style="left:801.2px;top:533.86px;width:10.6px;height:1px;background:#c4c4c4;"></div>
<svg class="t" style="left:803.5px;top:528.86px;" width="7" height="11" viewBox="0 0 7 11"><path d="M3.500 0L6.800 3.800H.2z" fill="#1a1a1a"/><path d="M3.500 10.800L.2 7H6.800z" fill="#1a1a1a"/></svg>
<div style="left:724.6px;top:527.96px;width:12.5px;height:12.6px;background:#0078d7;"></div>
<span class="t" style="left:725.2px;top:525.76px;line-height:18px;font-size:10.5px;color:#ffffff;font-family:'Liberation Mono',monospace;letter-spacing:-0.501px;">-4</span>
<svg class="t" style="left:627.5px;top:547.97px;" width="49.2" height="15.8"><text x="0" y="12.20" font-size="11.3" fill="#4a4a4a">对比度：</text></svg>
<div style="left:723.3px;top:548.0799999999999px;width:89.5px;height:15.8px;background:#ffffff;border:1px solid #a9a9a9;"></div>
<div style="left:801.2px;top:549.0799999999999px;width:10.6px;height:13.8px;background:#ededed;border-left:1px solid #c4c4c4;"></div>
<div style="left:801.2px;top:555.5799999999999px;width:10.6px;height:1px;background:#c4c4c4;"></div>
<svg class="t" style="left:803.5px;top:550.5799999999999px;" width="7" height="11" viewBox="0 0 7 11"><path d="M3.500 0L6.800 3.800H.2z" fill="#1a1a1a"/><path d="M3.500 10.800L.2 7H6.800z" fill="#1a1a1a"/></svg>
<span class="t" style="left:725.2px;top:547.48px;line-height:18px;font-size:10.5px;color:#666666;font-family:'Liberation Mono',monospace;letter-spacing:-0.501px;">0.80</span>
<div style="left:627.3px;top:569.8px;width:90.20000000000005px;height:19.600000000000023px;background:#e2e2e2;border:1px solid #cacaca;border-radius:4px;"></div>
<svg class="t" style="left:649.8px;top:571.69px;" width="49.2" height="15.8"><text x="0" y="12.20" font-size="11.3" fill="#4a4a4a">重新调整</text></svg>
<div style="left:723.3px;top:569.8px;width:89.40000000000009px;height:19.600000000000023px;background:#e2e2e2;border:1px solid #cacaca;border-radius:4px;"></div>
<svg class="t" style="left:745.4px;top:571.69px;" width="49.2" height="15.8"><text x="0" y="12.20" font-size="11.3" fill="#4a4a4a">确定参数</text></svg>
<svg class="t" style="left:1158px;top:695.45px;filter:drop-shadow(1px 1.500px 1.200px rgba(0,0,0,.75));" width="95.5" height="59.5"><text x="0" y="45.90" font-size="42.5" font-weight="bold" fill="#ffffff" letter-spacing="3.2">知乎</text></svg>
<svg class="t" style="left:1262px;top:687.00px;filter:drop-shadow(1px 1.500px 1.200px rgba(0,0,0,.75));" width="45.6" height="61.6"><text x="0" y="47.52" font-size="44" fill="#ffffff" stroke="#ffffff" stroke-width="0.88" textLength="41" lengthAdjust="spacingAndGlyphs">@</text></svg>
<svg class="t" style="left:1301.5px;top:692.30px;filter:drop-shadow(1px 1.500px 1.200px rgba(0,0,0,.75));" width="105.0" height="58.8"><text x="0" y="45.36" font-size="42" fill="#ffffff" stroke="#ffffff" stroke-width="0.88" letter-spacing="0.5">la vie</text></svg>
</body></html>
